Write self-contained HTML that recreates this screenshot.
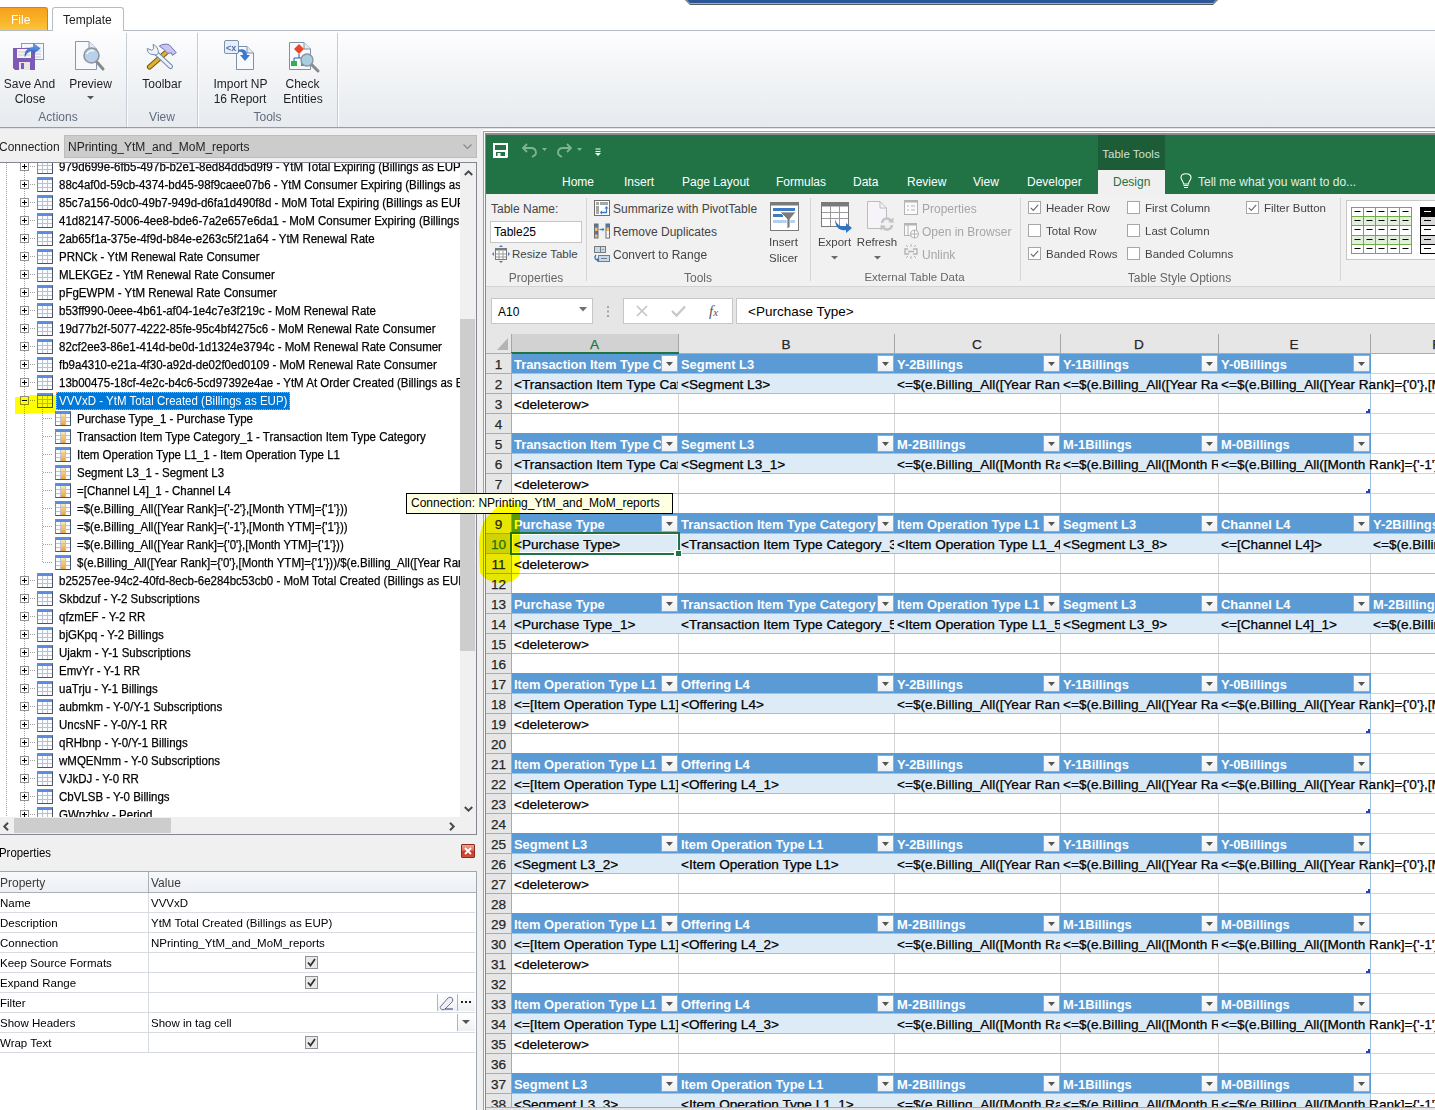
<!DOCTYPE html>
<html><head><meta charset="utf-8">
<style>
*{box-sizing:border-box}
html,body{margin:0;padding:0}
body{width:1435px;height:1110px;overflow:hidden;position:relative;background:#fff;font-family:"Liberation Sans",sans-serif;color:#000}
.a{position:absolute}
.t{position:absolute;white-space:pre;line-height:1}
.s{-webkit-text-stroke:0.25px currentColor}
svg{position:absolute;overflow:visible}
</style></head><body>
<div class="a" style="left:0;top:0;width:1435px;height:31px;background:#fff"></div><svg style="left:685px;top:0" width="533" height="6" viewBox="0 0 533 6"><path d="M0,0 L5,5 L528,5 L533,0 Z" fill="#5a5a5a"/><path d="M1,0 L5,4 L528,4 L532,0 Z" fill="#8fb3df"/><path d="M2,0 L5,3 L528,3 L531,0 Z" fill="#2b5796"/></svg><div class="a" style="left:0;top:30px;width:1435px;height:1px;background:#b6bcc6"></div><div class="a" style="left:0;top:7px;width:48px;height:23px;background:linear-gradient(#f9a01b,#f8b42a 60%,#fbc63c);border:1px solid #d9800f;border-left:none;border-bottom:none;border-radius:0 3px 0 0"></div><div class="t" style="left:11px;top:14px;font-size:12px;color:#fff">File</div><div class="a" style="left:52px;top:7px;width:72px;height:25px;background:#fff;border:1px solid #b6bcc6;border-bottom:none;border-radius:3px 3px 0 0"></div><div class="t" style="left:63px;top:14px;font-size:12px;color:#1e1e1e">Template</div><div class="a" style="left:0;top:31px;width:1435px;height:96px;background:linear-gradient(#fdfdfe,#f3f5f7 40%,#e7eaee)"></div><div class="a" style="left:0;top:127px;width:1435px;height:1px;background:#959daa"></div><div class="a" style="left:0;top:128px;width:1435px;height:1px;background:#dfe3e8"></div><div class="a" style="left:126px;top:33px;width:1px;height:94px;background:#c6ccd4"></div><div class="a" style="left:127px;top:33px;width:1px;height:94px;background:#fcfcfd"></div><div class="a" style="left:197px;top:33px;width:1px;height:94px;background:#c6ccd4"></div><div class="a" style="left:198px;top:33px;width:1px;height:94px;background:#fcfcfd"></div><div class="a" style="left:337px;top:33px;width:1px;height:94px;background:#c6ccd4"></div><div class="a" style="left:338px;top:33px;width:1px;height:94px;background:#fcfcfd"></div><div class="t" style="left:-120.5px;width:300px;text-align:center;top:77.8px;font-size:12px;color:#1e1e1e;">Save And</div><div class="t" style="left:-120px;width:300px;text-align:center;top:92.8px;font-size:12px;color:#1e1e1e;">Close</div><div class="t" style="left:-59.5px;width:300px;text-align:center;top:77.8px;font-size:12px;color:#1e1e1e;">Preview</div><svg style="left:87px;top:96px" width="7" height="4"><path d="M0,0 L7,0 L3.5,3.5Z" fill="#555"/></svg><div class="t" style="left:-92px;width:300px;text-align:center;top:110.8px;font-size:12px;color:#5f6b7d;">Actions</div><div class="t" style="left:12px;width:300px;text-align:center;top:77.8px;font-size:12px;color:#1e1e1e;">Toolbar</div><div class="t" style="left:12px;width:300px;text-align:center;top:110.8px;font-size:12px;color:#5f6b7d;">View</div><div class="t" style="left:90.5px;width:300px;text-align:center;top:77.8px;font-size:12px;color:#1e1e1e;">Import NP</div><div class="t" style="left:90px;width:300px;text-align:center;top:92.8px;font-size:12px;color:#1e1e1e;">16 Report</div><div class="t" style="left:152.5px;width:300px;text-align:center;top:77.8px;font-size:12px;color:#1e1e1e;">Check</div><div class="t" style="left:153px;width:300px;text-align:center;top:92.8px;font-size:12px;color:#1e1e1e;">Entities</div><div class="t" style="left:117.5px;width:300px;text-align:center;top:110.8px;font-size:12px;color:#5f6b7d;">Tools</div><svg style="left:12px;top:42px" width="34" height="30" viewBox="0 0 34 30">
<rect x="9.5" y="1.5" width="22" height="16" fill="#f4f7fb" stroke="#8a9bb5"/>
<line x1="13" y1="6" x2="29" y2="6" stroke="#b8c8dc"/><line x1="13" y1="9" x2="29" y2="9" stroke="#b8c8dc"/><line x1="13" y1="12" x2="29" y2="12" stroke="#b8c8dc"/><line x1="13" y1="15" x2="29" y2="15" stroke="#b8c8dc"/>
<path d="M1,6 L23,6 L23,28 L3,28 L1,26 Z" fill="#7d5bb5"/>
<rect x="5" y="7" width="14" height="9" fill="#f3f3f3"/><line x1="6" y1="10" x2="18" y2="10" stroke="#ccc"/><line x1="6" y1="13" x2="18" y2="13" stroke="#ccc"/>
<rect x="7" y="20" width="11" height="8" fill="#e6e6e6"/><rect x="9" y="21" width="3" height="6" fill="#7d5bb5"/>
<defs><linearGradient id="sa" x1="0" y1="0" x2="0" y2="1"><stop offset="0" stop-color="#6aa6ee"/><stop offset="1" stop-color="#2458c0"/></linearGradient></defs><path d="M13,14.5 C12.5,9 16,5.5 21.5,5.5 L21.5,1.5 L28,6.5 L21.5,11.5 L21.5,8.5 C17.5,8.5 14.5,10.5 13,14.5 Z" fill="url(#sa)" stroke="#2a5cb8" stroke-width="0.5"/>
</svg><svg style="left:74px;top:40px" width="32" height="32" viewBox="0 0 32 32">
<path d="M1.5,1.5 L15,1.5 L22.5,9 L22.5,29.5 L1.5,29.5 Z" fill="#f7f9fc" stroke="#8797ae"/>
<path d="M15,1.5 L15,9 L22.5,9" fill="#e3e9f1" stroke="#8797ae"/>
<line x1="22" y1="21" x2="29" y2="29" stroke="#8a8a8a" stroke-width="3" stroke-linecap="round"/>
<circle cx="17.5" cy="15.5" r="7.5" fill="#b9d0ec" stroke="#8f959c" stroke-width="1.6"/>
<path d="M13,14 C14,11 17,10 20,11" stroke="#fff" stroke-width="1.2" fill="none"/>
</svg><svg style="left:146px;top:43px" width="32" height="28" viewBox="0 0 32 28">
<line x1="3.5" y1="24" x2="20" y2="9.5" stroke="#7a5608" stroke-width="5.2" stroke-linecap="round"/>
<line x1="3.5" y1="24" x2="20" y2="9.5" stroke="#e0b030" stroke-width="3.2" stroke-linecap="round"/>
<path d="M13.3,3.1 C16,1 20,0.8 23,1.6 L29.4,8.5 L30.3,9.6 L26.4,12.4 L25.5,9.9 L21.6,10.4 L18,6.5 Z" fill="#c9c5ec" stroke="#7470b8" stroke-width="1"/>
<line x1="10" y1="10" x2="24.5" y2="23.5" stroke="#6f88ad" stroke-width="5" stroke-linecap="round"/>
<line x1="10" y1="10" x2="24.5" y2="23.5" stroke="#eef3fa" stroke-width="3" stroke-linecap="round"/>
<path d="M1.3,5.5 C1,9 3.5,11.5 7,11.5 L10.5,12 L12.5,10 C12,6.5 11.5,3 7,1.5 L7.8,5.5 L5.8,7.3 Z" fill="#eef3fa" stroke="#6f88ad" stroke-width="1"/>
</svg><svg style="left:223px;top:39px" width="33" height="32" viewBox="0 0 33 32">
<path d="M13.5,7.5 L24,7.5 L30.5,14 L30.5,30.5 L13.5,30.5 Z" fill="#f7f9fc" stroke="#8090a8"/>
<path d="M24,7.5 L24,14 L30.5,14" fill="#e4eaf2" stroke="#8090a8"/>
<rect x="1.5" y="1.5" width="14" height="13" rx="1.5" fill="#e8eef8" stroke="#8090a8"/>
<text x="3" y="12" font-family="Liberation Sans" font-size="9" font-weight="bold" fill="#4a6fb0">&lt;x</text>
<path d="M15,11 C20,9 24,11 24,16 L27,16 L22,22 L17,16 L20,16 C20,13 18,12 15,13Z" fill="#3a78d4"/>
</svg><svg style="left:288px;top:41px" width="34" height="32" viewBox="0 0 34 32">
<path d="M1.5,1.5 L16,1.5 L22.5,8 L22.5,28.5 L1.5,28.5 Z" fill="#f7f9fc" stroke="#8090a8"/>
<path d="M16,1.5 L16,8 L22.5,8" fill="#e4eaf2" stroke="#8090a8"/>
<path d="M11,3 L16,8 L11,13 L6,8Z" fill="#e8462a"/>
<path d="M11,13 L11,17 M6,17 L16,17 M6,17 L6,20 M16,17 L16,20" stroke="#2a5ea8" fill="none"/>
<rect x="3" y="20" width="6" height="5" fill="#2fb24a"/><rect x="13" y="20" width="6" height="5" fill="#2fb24a"/>
<line x1="23" y1="23" x2="30" y2="30" stroke="#8a8a8a" stroke-width="3" stroke-linecap="round"/>
<circle cx="19" cy="19" r="6" fill="#a8cfe0" stroke="#8f959c" stroke-width="1.4"/>
</svg><div class="a" style="left:0;top:129px;width:483px;height:981px;background:#f0f0f0"></div><div class="t" style="left:-1px;top:140.8px;font-size:12px;color:#1e1e1e;">Connection</div><div class="a" style="left:64px;top:135px;width:413px;height:23px;background:#cccccc;border:1px solid #bcbcbc"></div><div class="t" style="left:68px;top:140.8px;font-size:12px;color:#1e1e1e;">NPrinting_YtM_and_MoM_reports</div><svg style="left:463px;top:144px" width="10" height="6"><path d="M0.5,0.5 L4.5,4.5 L8.5,0.5" stroke="#8a8a8a" stroke-width="1.2" fill="none"/></svg><div class="a" style="left:-1px;top:162px;width:478px;height:673px;border:1px solid #828790;background:#fff"></div><div class="a" style="left:460px;top:163px;width:16px;height:654px;background:#f0f0f0"></div><div class="a" style="left:460px;top:319px;width:15px;height:332px;background:#cdcdcd"></div><svg style="left:464px;top:170px" width="9" height="6"><path d="M0.8,5 L4.5,1.3 L8.2,5" stroke="#4a4a4a" stroke-width="2" fill="none"/></svg><svg style="left:464px;top:806px" width="9" height="6"><path d="M0.8,1 L4.5,4.7 L8.2,1" stroke="#4a4a4a" stroke-width="2" fill="none"/></svg><div class="a" style="left:0;top:817px;width:476px;height:17px;background:#f0f0f0"></div><div class="a" style="left:14px;top:818px;width:157px;height:15px;background:#cdcdcd"></div><svg style="left:3px;top:822px" width="6" height="9"><path d="M5,0.8 L1.3,4.5 L5,8.2" stroke="#4a4a4a" stroke-width="2" fill="none"/></svg><svg style="left:449px;top:822px" width="6" height="9"><path d="M1,0.8 L4.7,4.5 L1,8.2" stroke="#4a4a4a" stroke-width="2" fill="none"/></svg><div class="a" style="left:0;top:163px;width:460px;height:654px;overflow:hidden"><svg style="left:0;top:0;width:0;height:0"><defs><linearGradient id="og" x1="0" y1="0" x2="0" y2="1"><stop offset="0" stop-color="#fbe7b8"/><stop offset="1" stop-color="#eca238"/></linearGradient></defs></svg><div class="a" style="left:6px;top:0;width:1px;height:655px;background:repeating-linear-gradient(#a0a0a0 0 1px,transparent 1px 2px)"></div><div class="a" style="left:24px;top:0;width:1px;height:655px;background:repeating-linear-gradient(#a0a0a0 0 1px,transparent 1px 2px)"></div><div class="a" style="left:42px;top:246px;width:1px;height:153px;background:repeating-linear-gradient(#a0a0a0 0 1px,transparent 1px 2px)"></div><div class="a" style="left:20px;top:-1px;width:9px;height:9px;background:#fff;border:1px solid #919191"></div><div class="a" style="left:22px;top:3px;width:5px;height:1px;background:#000"></div><div class="a" style="left:24px;top:1px;width:1px;height:5px;background:#000"></div><div class="a" style="left:30px;top:3px;width:6px;height:1px;background:repeating-linear-gradient(90deg,#a0a0a0 0 1px,transparent 1px 2px)"></div><svg style="left:37px;top:-4px" width="16" height="15" viewBox="0 0 16 15"><rect x="0.5" y="0.5" width="15" height="14" fill="#fbfcfe" stroke="#7f8ca0"/><rect x="1" y="1" width="14" height="2" fill="#5a8de0"/><path d="M5.5,3 V14 M10.5,3 V14 M1,6.5 H15 M1,10.5 H15" stroke="#b8c2d0" fill="none"/><path d="M0.5,14.5 H15.5 V0.5" stroke="#475469" fill="none"/></svg><div class="t s" style="left:59px;top:-2.0px;font-size:12.5px;transform:scaleX(0.92);transform-origin:0 0;color:#000">979d699e-6fb5-497b-b2e1-8ed84dd5d9f9 - YtM Total Expiring (Billings as EUP)</div><div class="a" style="left:20px;top:17px;width:9px;height:9px;background:#fff;border:1px solid #919191"></div><div class="a" style="left:22px;top:21px;width:5px;height:1px;background:#000"></div><div class="a" style="left:24px;top:19px;width:1px;height:5px;background:#000"></div><div class="a" style="left:30px;top:21px;width:6px;height:1px;background:repeating-linear-gradient(90deg,#a0a0a0 0 1px,transparent 1px 2px)"></div><svg style="left:37px;top:14px" width="16" height="15" viewBox="0 0 16 15"><rect x="0.5" y="0.5" width="15" height="14" fill="#fbfcfe" stroke="#7f8ca0"/><rect x="1" y="1" width="14" height="2" fill="#5a8de0"/><path d="M5.5,3 V14 M10.5,3 V14 M1,6.5 H15 M1,10.5 H15" stroke="#b8c2d0" fill="none"/><path d="M0.5,14.5 H15.5 V0.5" stroke="#475469" fill="none"/></svg><div class="t s" style="left:59px;top:16.0px;font-size:12.5px;transform:scaleX(0.92);transform-origin:0 0;color:#000">88c4af0d-59cb-4374-bd45-98f9caee07b6 - YtM Consumer Expiring (Billings as EUP)</div><div class="a" style="left:20px;top:35px;width:9px;height:9px;background:#fff;border:1px solid #919191"></div><div class="a" style="left:22px;top:39px;width:5px;height:1px;background:#000"></div><div class="a" style="left:24px;top:37px;width:1px;height:5px;background:#000"></div><div class="a" style="left:30px;top:39px;width:6px;height:1px;background:repeating-linear-gradient(90deg,#a0a0a0 0 1px,transparent 1px 2px)"></div><svg style="left:37px;top:32px" width="16" height="15" viewBox="0 0 16 15"><rect x="0.5" y="0.5" width="15" height="14" fill="#fbfcfe" stroke="#7f8ca0"/><rect x="1" y="1" width="14" height="2" fill="#5a8de0"/><path d="M5.5,3 V14 M10.5,3 V14 M1,6.5 H15 M1,10.5 H15" stroke="#b8c2d0" fill="none"/><path d="M0.5,14.5 H15.5 V0.5" stroke="#475469" fill="none"/></svg><div class="t s" style="left:59px;top:34.0px;font-size:12.5px;transform:scaleX(0.92);transform-origin:0 0;color:#000">85c7a156-0dc0-49b7-949d-d6fa1d490f8d - MoM Total Expiring (Billings as EUP)</div><div class="a" style="left:20px;top:53px;width:9px;height:9px;background:#fff;border:1px solid #919191"></div><div class="a" style="left:22px;top:57px;width:5px;height:1px;background:#000"></div><div class="a" style="left:24px;top:55px;width:1px;height:5px;background:#000"></div><div class="a" style="left:30px;top:57px;width:6px;height:1px;background:repeating-linear-gradient(90deg,#a0a0a0 0 1px,transparent 1px 2px)"></div><svg style="left:37px;top:50px" width="16" height="15" viewBox="0 0 16 15"><rect x="0.5" y="0.5" width="15" height="14" fill="#fbfcfe" stroke="#7f8ca0"/><rect x="1" y="1" width="14" height="2" fill="#5a8de0"/><path d="M5.5,3 V14 M10.5,3 V14 M1,6.5 H15 M1,10.5 H15" stroke="#b8c2d0" fill="none"/><path d="M0.5,14.5 H15.5 V0.5" stroke="#475469" fill="none"/></svg><div class="t s" style="left:59px;top:52.0px;font-size:12.5px;transform:scaleX(0.92);transform-origin:0 0;color:#000">41d82147-5006-4ee8-bde6-7a2e657e6da1 - MoM Consumer Expiring (Billings as EUP)</div><div class="a" style="left:20px;top:71px;width:9px;height:9px;background:#fff;border:1px solid #919191"></div><div class="a" style="left:22px;top:75px;width:5px;height:1px;background:#000"></div><div class="a" style="left:24px;top:73px;width:1px;height:5px;background:#000"></div><div class="a" style="left:30px;top:75px;width:6px;height:1px;background:repeating-linear-gradient(90deg,#a0a0a0 0 1px,transparent 1px 2px)"></div><svg style="left:37px;top:68px" width="16" height="15" viewBox="0 0 16 15"><rect x="0.5" y="0.5" width="15" height="14" fill="#fbfcfe" stroke="#7f8ca0"/><rect x="1" y="1" width="14" height="2" fill="#5a8de0"/><path d="M5.5,3 V14 M10.5,3 V14 M1,6.5 H15 M1,10.5 H15" stroke="#b8c2d0" fill="none"/><path d="M0.5,14.5 H15.5 V0.5" stroke="#475469" fill="none"/></svg><div class="t s" style="left:59px;top:70.0px;font-size:12.5px;transform:scaleX(0.92);transform-origin:0 0;color:#000">2ab65f1a-375e-4f9d-b84e-e263c5f21a64 - YtM Renewal Rate</div><div class="a" style="left:20px;top:89px;width:9px;height:9px;background:#fff;border:1px solid #919191"></div><div class="a" style="left:22px;top:93px;width:5px;height:1px;background:#000"></div><div class="a" style="left:24px;top:91px;width:1px;height:5px;background:#000"></div><div class="a" style="left:30px;top:93px;width:6px;height:1px;background:repeating-linear-gradient(90deg,#a0a0a0 0 1px,transparent 1px 2px)"></div><svg style="left:37px;top:86px" width="16" height="15" viewBox="0 0 16 15"><rect x="0.5" y="0.5" width="15" height="14" fill="#fbfcfe" stroke="#7f8ca0"/><rect x="1" y="1" width="14" height="2" fill="#5a8de0"/><path d="M5.5,3 V14 M10.5,3 V14 M1,6.5 H15 M1,10.5 H15" stroke="#b8c2d0" fill="none"/><path d="M0.5,14.5 H15.5 V0.5" stroke="#475469" fill="none"/></svg><div class="t s" style="left:59px;top:88.0px;font-size:12.5px;transform:scaleX(0.92);transform-origin:0 0;color:#000">PRNCk - YtM Renewal Rate Consumer</div><div class="a" style="left:20px;top:107px;width:9px;height:9px;background:#fff;border:1px solid #919191"></div><div class="a" style="left:22px;top:111px;width:5px;height:1px;background:#000"></div><div class="a" style="left:24px;top:109px;width:1px;height:5px;background:#000"></div><div class="a" style="left:30px;top:111px;width:6px;height:1px;background:repeating-linear-gradient(90deg,#a0a0a0 0 1px,transparent 1px 2px)"></div><svg style="left:37px;top:104px" width="16" height="15" viewBox="0 0 16 15"><rect x="0.5" y="0.5" width="15" height="14" fill="#fbfcfe" stroke="#7f8ca0"/><rect x="1" y="1" width="14" height="2" fill="#5a8de0"/><path d="M5.5,3 V14 M10.5,3 V14 M1,6.5 H15 M1,10.5 H15" stroke="#b8c2d0" fill="none"/><path d="M0.5,14.5 H15.5 V0.5" stroke="#475469" fill="none"/></svg><div class="t s" style="left:59px;top:106.0px;font-size:12.5px;transform:scaleX(0.92);transform-origin:0 0;color:#000">MLEKGEz - YtM Renewal Rate Consumer</div><div class="a" style="left:20px;top:125px;width:9px;height:9px;background:#fff;border:1px solid #919191"></div><div class="a" style="left:22px;top:129px;width:5px;height:1px;background:#000"></div><div class="a" style="left:24px;top:127px;width:1px;height:5px;background:#000"></div><div class="a" style="left:30px;top:129px;width:6px;height:1px;background:repeating-linear-gradient(90deg,#a0a0a0 0 1px,transparent 1px 2px)"></div><svg style="left:37px;top:122px" width="16" height="15" viewBox="0 0 16 15"><rect x="0.5" y="0.5" width="15" height="14" fill="#fbfcfe" stroke="#7f8ca0"/><rect x="1" y="1" width="14" height="2" fill="#5a8de0"/><path d="M5.5,3 V14 M10.5,3 V14 M1,6.5 H15 M1,10.5 H15" stroke="#b8c2d0" fill="none"/><path d="M0.5,14.5 H15.5 V0.5" stroke="#475469" fill="none"/></svg><div class="t s" style="left:59px;top:124.0px;font-size:12.5px;transform:scaleX(0.92);transform-origin:0 0;color:#000">pFgEWPM - YtM Renewal Rate Consumer</div><div class="a" style="left:20px;top:143px;width:9px;height:9px;background:#fff;border:1px solid #919191"></div><div class="a" style="left:22px;top:147px;width:5px;height:1px;background:#000"></div><div class="a" style="left:24px;top:145px;width:1px;height:5px;background:#000"></div><div class="a" style="left:30px;top:147px;width:6px;height:1px;background:repeating-linear-gradient(90deg,#a0a0a0 0 1px,transparent 1px 2px)"></div><svg style="left:37px;top:140px" width="16" height="15" viewBox="0 0 16 15"><rect x="0.5" y="0.5" width="15" height="14" fill="#fbfcfe" stroke="#7f8ca0"/><rect x="1" y="1" width="14" height="2" fill="#5a8de0"/><path d="M5.5,3 V14 M10.5,3 V14 M1,6.5 H15 M1,10.5 H15" stroke="#b8c2d0" fill="none"/><path d="M0.5,14.5 H15.5 V0.5" stroke="#475469" fill="none"/></svg><div class="t s" style="left:59px;top:142.0px;font-size:12.5px;transform:scaleX(0.92);transform-origin:0 0;color:#000">b53ff990-0eee-4b61-af04-1e4c7e3f219c - MoM Renewal Rate</div><div class="a" style="left:20px;top:161px;width:9px;height:9px;background:#fff;border:1px solid #919191"></div><div class="a" style="left:22px;top:165px;width:5px;height:1px;background:#000"></div><div class="a" style="left:24px;top:163px;width:1px;height:5px;background:#000"></div><div class="a" style="left:30px;top:165px;width:6px;height:1px;background:repeating-linear-gradient(90deg,#a0a0a0 0 1px,transparent 1px 2px)"></div><svg style="left:37px;top:158px" width="16" height="15" viewBox="0 0 16 15"><rect x="0.5" y="0.5" width="15" height="14" fill="#fbfcfe" stroke="#7f8ca0"/><rect x="1" y="1" width="14" height="2" fill="#5a8de0"/><path d="M5.5,3 V14 M10.5,3 V14 M1,6.5 H15 M1,10.5 H15" stroke="#b8c2d0" fill="none"/><path d="M0.5,14.5 H15.5 V0.5" stroke="#475469" fill="none"/></svg><div class="t s" style="left:59px;top:160.0px;font-size:12.5px;transform:scaleX(0.92);transform-origin:0 0;color:#000">19d77b2f-5077-4222-85fe-95c4bf4275c6 - MoM Renewal Rate Consumer</div><div class="a" style="left:20px;top:179px;width:9px;height:9px;background:#fff;border:1px solid #919191"></div><div class="a" style="left:22px;top:183px;width:5px;height:1px;background:#000"></div><div class="a" style="left:24px;top:181px;width:1px;height:5px;background:#000"></div><div class="a" style="left:30px;top:183px;width:6px;height:1px;background:repeating-linear-gradient(90deg,#a0a0a0 0 1px,transparent 1px 2px)"></div><svg style="left:37px;top:176px" width="16" height="15" viewBox="0 0 16 15"><rect x="0.5" y="0.5" width="15" height="14" fill="#fbfcfe" stroke="#7f8ca0"/><rect x="1" y="1" width="14" height="2" fill="#5a8de0"/><path d="M5.5,3 V14 M10.5,3 V14 M1,6.5 H15 M1,10.5 H15" stroke="#b8c2d0" fill="none"/><path d="M0.5,14.5 H15.5 V0.5" stroke="#475469" fill="none"/></svg><div class="t s" style="left:59px;top:178.0px;font-size:12.5px;transform:scaleX(0.92);transform-origin:0 0;color:#000">82cf2ee3-86e1-414d-be0d-1d1324e3794c - MoM Renewal Rate Consumer</div><div class="a" style="left:20px;top:197px;width:9px;height:9px;background:#fff;border:1px solid #919191"></div><div class="a" style="left:22px;top:201px;width:5px;height:1px;background:#000"></div><div class="a" style="left:24px;top:199px;width:1px;height:5px;background:#000"></div><div class="a" style="left:30px;top:201px;width:6px;height:1px;background:repeating-linear-gradient(90deg,#a0a0a0 0 1px,transparent 1px 2px)"></div><svg style="left:37px;top:194px" width="16" height="15" viewBox="0 0 16 15"><rect x="0.5" y="0.5" width="15" height="14" fill="#fbfcfe" stroke="#7f8ca0"/><rect x="1" y="1" width="14" height="2" fill="#5a8de0"/><path d="M5.5,3 V14 M10.5,3 V14 M1,6.5 H15 M1,10.5 H15" stroke="#b8c2d0" fill="none"/><path d="M0.5,14.5 H15.5 V0.5" stroke="#475469" fill="none"/></svg><div class="t s" style="left:59px;top:196.0px;font-size:12.5px;transform:scaleX(0.92);transform-origin:0 0;color:#000">fb9a4310-e21a-4f30-a92d-de02f0ed0109 - MoM Renewal Rate Consumer</div><div class="a" style="left:20px;top:215px;width:9px;height:9px;background:#fff;border:1px solid #919191"></div><div class="a" style="left:22px;top:219px;width:5px;height:1px;background:#000"></div><div class="a" style="left:24px;top:217px;width:1px;height:5px;background:#000"></div><div class="a" style="left:30px;top:219px;width:6px;height:1px;background:repeating-linear-gradient(90deg,#a0a0a0 0 1px,transparent 1px 2px)"></div><svg style="left:37px;top:212px" width="16" height="15" viewBox="0 0 16 15"><rect x="0.5" y="0.5" width="15" height="14" fill="#fbfcfe" stroke="#7f8ca0"/><rect x="1" y="1" width="14" height="2" fill="#5a8de0"/><path d="M5.5,3 V14 M10.5,3 V14 M1,6.5 H15 M1,10.5 H15" stroke="#b8c2d0" fill="none"/><path d="M0.5,14.5 H15.5 V0.5" stroke="#475469" fill="none"/></svg><div class="t s" style="left:59px;top:214.0px;font-size:12.5px;transform:scaleX(0.92);transform-origin:0 0;color:#000">13b00475-18cf-4e2c-b4c6-5cd97392e4ae - YtM At Order Created (Billings as EUP)</div><div class="a" style="left:20px;top:233px;width:9px;height:9px;background:#fff;border:1px solid #919191"></div><div class="a" style="left:22px;top:237px;width:5px;height:1px;background:#000"></div><div class="a" style="left:30px;top:237px;width:6px;height:1px;background:repeating-linear-gradient(90deg,#a0a0a0 0 1px,transparent 1px 2px)"></div><svg style="left:37px;top:230px" width="16" height="15" viewBox="0 0 16 15"><rect x="0.5" y="0.5" width="15" height="14" fill="#fbfcfe" stroke="#7f8ca0"/><rect x="1" y="1" width="14" height="2" fill="#5a8de0"/><path d="M5.5,3 V14 M10.5,3 V14 M1,6.5 H15 M1,10.5 H15" stroke="#b8c2d0" fill="none"/><path d="M0.5,14.5 H15.5 V0.5" stroke="#475469" fill="none"/></svg><div class="a" style="left:56px;top:229px;width:234px;height:18px;background:#0078d7;border:1px dotted #ff9a3c"></div><div class="t" style="left:59px;top:232.0px;font-size:12.5px;transform:scaleX(0.92);transform-origin:0 0;color:#fff">VVVxD - YtM Total Created (Billings as EUP)</div><div class="a" style="left:43px;top:255px;width:9px;height:1px;background:repeating-linear-gradient(90deg,#a0a0a0 0 1px,transparent 1px 2px)"></div><svg style="left:55px;top:248px" width="16" height="15" viewBox="0 0 16 15"><rect x="0.5" y="0.5" width="15" height="14" fill="#fbfcfe" stroke="#7f8ca0"/><rect x="6" y="3" width="4" height="11" fill="url(#og)"/><rect x="1" y="1" width="14" height="2" fill="#5a8de0"/><path d="M5.5,3 V14 M10.5,3 V14 M1,6.5 H15 M1,10.5 H15" stroke="#b8c2d0" fill="none"/><path d="M0.5,14.5 H15.5 V0.5" stroke="#475469" fill="none"/></svg><div class="t s" style="left:77px;top:250.0px;font-size:12.5px;transform:scaleX(0.92);transform-origin:0 0;color:#000">Purchase Type_1 - Purchase Type</div><div class="a" style="left:43px;top:273px;width:9px;height:1px;background:repeating-linear-gradient(90deg,#a0a0a0 0 1px,transparent 1px 2px)"></div><svg style="left:55px;top:266px" width="16" height="15" viewBox="0 0 16 15"><rect x="0.5" y="0.5" width="15" height="14" fill="#fbfcfe" stroke="#7f8ca0"/><rect x="6" y="3" width="4" height="11" fill="url(#og)"/><rect x="1" y="1" width="14" height="2" fill="#5a8de0"/><path d="M5.5,3 V14 M10.5,3 V14 M1,6.5 H15 M1,10.5 H15" stroke="#b8c2d0" fill="none"/><path d="M0.5,14.5 H15.5 V0.5" stroke="#475469" fill="none"/></svg><div class="t s" style="left:77px;top:268.0px;font-size:12.5px;transform:scaleX(0.92);transform-origin:0 0;color:#000">Transaction Item Type Category_1 - Transaction Item Type Category</div><div class="a" style="left:43px;top:291px;width:9px;height:1px;background:repeating-linear-gradient(90deg,#a0a0a0 0 1px,transparent 1px 2px)"></div><svg style="left:55px;top:284px" width="16" height="15" viewBox="0 0 16 15"><rect x="0.5" y="0.5" width="15" height="14" fill="#fbfcfe" stroke="#7f8ca0"/><rect x="6" y="3" width="4" height="11" fill="url(#og)"/><rect x="1" y="1" width="14" height="2" fill="#5a8de0"/><path d="M5.5,3 V14 M10.5,3 V14 M1,6.5 H15 M1,10.5 H15" stroke="#b8c2d0" fill="none"/><path d="M0.5,14.5 H15.5 V0.5" stroke="#475469" fill="none"/></svg><div class="t s" style="left:77px;top:286.0px;font-size:12.5px;transform:scaleX(0.92);transform-origin:0 0;color:#000">Item Operation Type L1_1 - Item Operation Type L1</div><div class="a" style="left:43px;top:309px;width:9px;height:1px;background:repeating-linear-gradient(90deg,#a0a0a0 0 1px,transparent 1px 2px)"></div><svg style="left:55px;top:302px" width="16" height="15" viewBox="0 0 16 15"><rect x="0.5" y="0.5" width="15" height="14" fill="#fbfcfe" stroke="#7f8ca0"/><rect x="6" y="3" width="4" height="11" fill="url(#og)"/><rect x="1" y="1" width="14" height="2" fill="#5a8de0"/><path d="M5.5,3 V14 M10.5,3 V14 M1,6.5 H15 M1,10.5 H15" stroke="#b8c2d0" fill="none"/><path d="M0.5,14.5 H15.5 V0.5" stroke="#475469" fill="none"/></svg><div class="t s" style="left:77px;top:304.0px;font-size:12.5px;transform:scaleX(0.92);transform-origin:0 0;color:#000">Segment L3_1 - Segment L3</div><div class="a" style="left:43px;top:327px;width:9px;height:1px;background:repeating-linear-gradient(90deg,#a0a0a0 0 1px,transparent 1px 2px)"></div><svg style="left:55px;top:320px" width="16" height="15" viewBox="0 0 16 15"><rect x="0.5" y="0.5" width="15" height="14" fill="#fbfcfe" stroke="#7f8ca0"/><rect x="6" y="3" width="4" height="11" fill="url(#og)"/><rect x="1" y="1" width="14" height="2" fill="#5a8de0"/><path d="M5.5,3 V14 M10.5,3 V14 M1,6.5 H15 M1,10.5 H15" stroke="#b8c2d0" fill="none"/><path d="M0.5,14.5 H15.5 V0.5" stroke="#475469" fill="none"/></svg><div class="t s" style="left:77px;top:322.0px;font-size:12.5px;transform:scaleX(0.92);transform-origin:0 0;color:#000">=[Channel L4]_1 - Channel L4</div><div class="a" style="left:43px;top:345px;width:9px;height:1px;background:repeating-linear-gradient(90deg,#a0a0a0 0 1px,transparent 1px 2px)"></div><svg style="left:55px;top:338px" width="16" height="15" viewBox="0 0 16 15"><rect x="0.5" y="0.5" width="15" height="14" fill="#fbfcfe" stroke="#7f8ca0"/><rect x="6" y="3" width="4" height="11" fill="url(#og)"/><rect x="1" y="1" width="14" height="2" fill="#5a8de0"/><path d="M5.5,3 V14 M10.5,3 V14 M1,6.5 H15 M1,10.5 H15" stroke="#b8c2d0" fill="none"/><path d="M0.5,14.5 H15.5 V0.5" stroke="#475469" fill="none"/></svg><div class="t s" style="left:77px;top:340.0px;font-size:12.5px;transform:scaleX(0.92);transform-origin:0 0;color:#000">=$(e.Billing_All([Year Rank]={'-2'},[Month YTM]={'1'}))</div><div class="a" style="left:43px;top:363px;width:9px;height:1px;background:repeating-linear-gradient(90deg,#a0a0a0 0 1px,transparent 1px 2px)"></div><svg style="left:55px;top:356px" width="16" height="15" viewBox="0 0 16 15"><rect x="0.5" y="0.5" width="15" height="14" fill="#fbfcfe" stroke="#7f8ca0"/><rect x="6" y="3" width="4" height="11" fill="url(#og)"/><rect x="1" y="1" width="14" height="2" fill="#5a8de0"/><path d="M5.5,3 V14 M10.5,3 V14 M1,6.5 H15 M1,10.5 H15" stroke="#b8c2d0" fill="none"/><path d="M0.5,14.5 H15.5 V0.5" stroke="#475469" fill="none"/></svg><div class="t s" style="left:77px;top:358.0px;font-size:12.5px;transform:scaleX(0.92);transform-origin:0 0;color:#000">=$(e.Billing_All([Year Rank]={'-1'},[Month YTM]={'1'}))</div><div class="a" style="left:43px;top:381px;width:9px;height:1px;background:repeating-linear-gradient(90deg,#a0a0a0 0 1px,transparent 1px 2px)"></div><svg style="left:55px;top:374px" width="16" height="15" viewBox="0 0 16 15"><rect x="0.5" y="0.5" width="15" height="14" fill="#fbfcfe" stroke="#7f8ca0"/><rect x="6" y="3" width="4" height="11" fill="url(#og)"/><rect x="1" y="1" width="14" height="2" fill="#5a8de0"/><path d="M5.5,3 V14 M10.5,3 V14 M1,6.5 H15 M1,10.5 H15" stroke="#b8c2d0" fill="none"/><path d="M0.5,14.5 H15.5 V0.5" stroke="#475469" fill="none"/></svg><div class="t s" style="left:77px;top:376.0px;font-size:12.5px;transform:scaleX(0.92);transform-origin:0 0;color:#000">=$(e.Billing_All([Year Rank]={'0'},[Month YTM]={'1'}))</div><div class="a" style="left:43px;top:399px;width:9px;height:1px;background:repeating-linear-gradient(90deg,#a0a0a0 0 1px,transparent 1px 2px)"></div><svg style="left:55px;top:392px" width="16" height="15" viewBox="0 0 16 15"><rect x="0.5" y="0.5" width="15" height="14" fill="#fbfcfe" stroke="#7f8ca0"/><rect x="6" y="3" width="4" height="11" fill="url(#og)"/><rect x="1" y="1" width="14" height="2" fill="#5a8de0"/><path d="M5.5,3 V14 M10.5,3 V14 M1,6.5 H15 M1,10.5 H15" stroke="#b8c2d0" fill="none"/><path d="M0.5,14.5 H15.5 V0.5" stroke="#475469" fill="none"/></svg><div class="t s" style="left:77px;top:394.0px;font-size:12.5px;transform:scaleX(0.92);transform-origin:0 0;color:#000">$(e.Billing_All([Year Rank]={'0'},[Month YTM]={'1'}))/$(e.Billing_All([Year Rank]={'-1'}))</div><div class="a" style="left:20px;top:413px;width:9px;height:9px;background:#fff;border:1px solid #919191"></div><div class="a" style="left:22px;top:417px;width:5px;height:1px;background:#000"></div><div class="a" style="left:24px;top:415px;width:1px;height:5px;background:#000"></div><div class="a" style="left:30px;top:417px;width:6px;height:1px;background:repeating-linear-gradient(90deg,#a0a0a0 0 1px,transparent 1px 2px)"></div><svg style="left:37px;top:410px" width="16" height="15" viewBox="0 0 16 15"><rect x="0.5" y="0.5" width="15" height="14" fill="#fbfcfe" stroke="#7f8ca0"/><rect x="1" y="1" width="14" height="2" fill="#5a8de0"/><path d="M5.5,3 V14 M10.5,3 V14 M1,6.5 H15 M1,10.5 H15" stroke="#b8c2d0" fill="none"/><path d="M0.5,14.5 H15.5 V0.5" stroke="#475469" fill="none"/></svg><div class="t s" style="left:59px;top:412.0px;font-size:12.5px;transform:scaleX(0.92);transform-origin:0 0;color:#000">b25257ee-94c2-40fd-8ecb-6e284bc53cb0 - MoM Total Created (Billings as EUP)</div><div class="a" style="left:20px;top:431px;width:9px;height:9px;background:#fff;border:1px solid #919191"></div><div class="a" style="left:22px;top:435px;width:5px;height:1px;background:#000"></div><div class="a" style="left:24px;top:433px;width:1px;height:5px;background:#000"></div><div class="a" style="left:30px;top:435px;width:6px;height:1px;background:repeating-linear-gradient(90deg,#a0a0a0 0 1px,transparent 1px 2px)"></div><svg style="left:37px;top:428px" width="16" height="15" viewBox="0 0 16 15"><rect x="0.5" y="0.5" width="15" height="14" fill="#fbfcfe" stroke="#7f8ca0"/><rect x="1" y="1" width="14" height="2" fill="#5a8de0"/><path d="M5.5,3 V14 M10.5,3 V14 M1,6.5 H15 M1,10.5 H15" stroke="#b8c2d0" fill="none"/><path d="M0.5,14.5 H15.5 V0.5" stroke="#475469" fill="none"/></svg><div class="t s" style="left:59px;top:430.0px;font-size:12.5px;transform:scaleX(0.92);transform-origin:0 0;color:#000">Skbdzuf - Y-2 Subscriptions</div><div class="a" style="left:20px;top:449px;width:9px;height:9px;background:#fff;border:1px solid #919191"></div><div class="a" style="left:22px;top:453px;width:5px;height:1px;background:#000"></div><div class="a" style="left:24px;top:451px;width:1px;height:5px;background:#000"></div><div class="a" style="left:30px;top:453px;width:6px;height:1px;background:repeating-linear-gradient(90deg,#a0a0a0 0 1px,transparent 1px 2px)"></div><svg style="left:37px;top:446px" width="16" height="15" viewBox="0 0 16 15"><rect x="0.5" y="0.5" width="15" height="14" fill="#fbfcfe" stroke="#7f8ca0"/><rect x="1" y="1" width="14" height="2" fill="#5a8de0"/><path d="M5.5,3 V14 M10.5,3 V14 M1,6.5 H15 M1,10.5 H15" stroke="#b8c2d0" fill="none"/><path d="M0.5,14.5 H15.5 V0.5" stroke="#475469" fill="none"/></svg><div class="t s" style="left:59px;top:448.0px;font-size:12.5px;transform:scaleX(0.92);transform-origin:0 0;color:#000">qfzmEF - Y-2 RR</div><div class="a" style="left:20px;top:467px;width:9px;height:9px;background:#fff;border:1px solid #919191"></div><div class="a" style="left:22px;top:471px;width:5px;height:1px;background:#000"></div><div class="a" style="left:24px;top:469px;width:1px;height:5px;background:#000"></div><div class="a" style="left:30px;top:471px;width:6px;height:1px;background:repeating-linear-gradient(90deg,#a0a0a0 0 1px,transparent 1px 2px)"></div><svg style="left:37px;top:464px" width="16" height="15" viewBox="0 0 16 15"><rect x="0.5" y="0.5" width="15" height="14" fill="#fbfcfe" stroke="#7f8ca0"/><rect x="1" y="1" width="14" height="2" fill="#5a8de0"/><path d="M5.5,3 V14 M10.5,3 V14 M1,6.5 H15 M1,10.5 H15" stroke="#b8c2d0" fill="none"/><path d="M0.5,14.5 H15.5 V0.5" stroke="#475469" fill="none"/></svg><div class="t s" style="left:59px;top:466.0px;font-size:12.5px;transform:scaleX(0.92);transform-origin:0 0;color:#000">bjGKpq - Y-2 Billings</div><div class="a" style="left:20px;top:485px;width:9px;height:9px;background:#fff;border:1px solid #919191"></div><div class="a" style="left:22px;top:489px;width:5px;height:1px;background:#000"></div><div class="a" style="left:24px;top:487px;width:1px;height:5px;background:#000"></div><div class="a" style="left:30px;top:489px;width:6px;height:1px;background:repeating-linear-gradient(90deg,#a0a0a0 0 1px,transparent 1px 2px)"></div><svg style="left:37px;top:482px" width="16" height="15" viewBox="0 0 16 15"><rect x="0.5" y="0.5" width="15" height="14" fill="#fbfcfe" stroke="#7f8ca0"/><rect x="1" y="1" width="14" height="2" fill="#5a8de0"/><path d="M5.5,3 V14 M10.5,3 V14 M1,6.5 H15 M1,10.5 H15" stroke="#b8c2d0" fill="none"/><path d="M0.5,14.5 H15.5 V0.5" stroke="#475469" fill="none"/></svg><div class="t s" style="left:59px;top:484.0px;font-size:12.5px;transform:scaleX(0.92);transform-origin:0 0;color:#000">Ujakm - Y-1 Subscriptions</div><div class="a" style="left:20px;top:503px;width:9px;height:9px;background:#fff;border:1px solid #919191"></div><div class="a" style="left:22px;top:507px;width:5px;height:1px;background:#000"></div><div class="a" style="left:24px;top:505px;width:1px;height:5px;background:#000"></div><div class="a" style="left:30px;top:507px;width:6px;height:1px;background:repeating-linear-gradient(90deg,#a0a0a0 0 1px,transparent 1px 2px)"></div><svg style="left:37px;top:500px" width="16" height="15" viewBox="0 0 16 15"><rect x="0.5" y="0.5" width="15" height="14" fill="#fbfcfe" stroke="#7f8ca0"/><rect x="1" y="1" width="14" height="2" fill="#5a8de0"/><path d="M5.5,3 V14 M10.5,3 V14 M1,6.5 H15 M1,10.5 H15" stroke="#b8c2d0" fill="none"/><path d="M0.5,14.5 H15.5 V0.5" stroke="#475469" fill="none"/></svg><div class="t s" style="left:59px;top:502.0px;font-size:12.5px;transform:scaleX(0.92);transform-origin:0 0;color:#000">EmvYr - Y-1 RR</div><div class="a" style="left:20px;top:521px;width:9px;height:9px;background:#fff;border:1px solid #919191"></div><div class="a" style="left:22px;top:525px;width:5px;height:1px;background:#000"></div><div class="a" style="left:24px;top:523px;width:1px;height:5px;background:#000"></div><div class="a" style="left:30px;top:525px;width:6px;height:1px;background:repeating-linear-gradient(90deg,#a0a0a0 0 1px,transparent 1px 2px)"></div><svg style="left:37px;top:518px" width="16" height="15" viewBox="0 0 16 15"><rect x="0.5" y="0.5" width="15" height="14" fill="#fbfcfe" stroke="#7f8ca0"/><rect x="1" y="1" width="14" height="2" fill="#5a8de0"/><path d="M5.5,3 V14 M10.5,3 V14 M1,6.5 H15 M1,10.5 H15" stroke="#b8c2d0" fill="none"/><path d="M0.5,14.5 H15.5 V0.5" stroke="#475469" fill="none"/></svg><div class="t s" style="left:59px;top:520.0px;font-size:12.5px;transform:scaleX(0.92);transform-origin:0 0;color:#000">uaTrju - Y-1 Billings</div><div class="a" style="left:20px;top:539px;width:9px;height:9px;background:#fff;border:1px solid #919191"></div><div class="a" style="left:22px;top:543px;width:5px;height:1px;background:#000"></div><div class="a" style="left:24px;top:541px;width:1px;height:5px;background:#000"></div><div class="a" style="left:30px;top:543px;width:6px;height:1px;background:repeating-linear-gradient(90deg,#a0a0a0 0 1px,transparent 1px 2px)"></div><svg style="left:37px;top:536px" width="16" height="15" viewBox="0 0 16 15"><rect x="0.5" y="0.5" width="15" height="14" fill="#fbfcfe" stroke="#7f8ca0"/><rect x="1" y="1" width="14" height="2" fill="#5a8de0"/><path d="M5.5,3 V14 M10.5,3 V14 M1,6.5 H15 M1,10.5 H15" stroke="#b8c2d0" fill="none"/><path d="M0.5,14.5 H15.5 V0.5" stroke="#475469" fill="none"/></svg><div class="t s" style="left:59px;top:538.0px;font-size:12.5px;transform:scaleX(0.92);transform-origin:0 0;color:#000">aubmkm - Y-0/Y-1 Subscriptions</div><div class="a" style="left:20px;top:557px;width:9px;height:9px;background:#fff;border:1px solid #919191"></div><div class="a" style="left:22px;top:561px;width:5px;height:1px;background:#000"></div><div class="a" style="left:24px;top:559px;width:1px;height:5px;background:#000"></div><div class="a" style="left:30px;top:561px;width:6px;height:1px;background:repeating-linear-gradient(90deg,#a0a0a0 0 1px,transparent 1px 2px)"></div><svg style="left:37px;top:554px" width="16" height="15" viewBox="0 0 16 15"><rect x="0.5" y="0.5" width="15" height="14" fill="#fbfcfe" stroke="#7f8ca0"/><rect x="1" y="1" width="14" height="2" fill="#5a8de0"/><path d="M5.5,3 V14 M10.5,3 V14 M1,6.5 H15 M1,10.5 H15" stroke="#b8c2d0" fill="none"/><path d="M0.5,14.5 H15.5 V0.5" stroke="#475469" fill="none"/></svg><div class="t s" style="left:59px;top:556.0px;font-size:12.5px;transform:scaleX(0.92);transform-origin:0 0;color:#000">UncsNF - Y-0/Y-1 RR</div><div class="a" style="left:20px;top:575px;width:9px;height:9px;background:#fff;border:1px solid #919191"></div><div class="a" style="left:22px;top:579px;width:5px;height:1px;background:#000"></div><div class="a" style="left:24px;top:577px;width:1px;height:5px;background:#000"></div><div class="a" style="left:30px;top:579px;width:6px;height:1px;background:repeating-linear-gradient(90deg,#a0a0a0 0 1px,transparent 1px 2px)"></div><svg style="left:37px;top:572px" width="16" height="15" viewBox="0 0 16 15"><rect x="0.5" y="0.5" width="15" height="14" fill="#fbfcfe" stroke="#7f8ca0"/><rect x="1" y="1" width="14" height="2" fill="#5a8de0"/><path d="M5.5,3 V14 M10.5,3 V14 M1,6.5 H15 M1,10.5 H15" stroke="#b8c2d0" fill="none"/><path d="M0.5,14.5 H15.5 V0.5" stroke="#475469" fill="none"/></svg><div class="t s" style="left:59px;top:574.0px;font-size:12.5px;transform:scaleX(0.92);transform-origin:0 0;color:#000">qRHbnp - Y-0/Y-1 Billings</div><div class="a" style="left:20px;top:593px;width:9px;height:9px;background:#fff;border:1px solid #919191"></div><div class="a" style="left:22px;top:597px;width:5px;height:1px;background:#000"></div><div class="a" style="left:24px;top:595px;width:1px;height:5px;background:#000"></div><div class="a" style="left:30px;top:597px;width:6px;height:1px;background:repeating-linear-gradient(90deg,#a0a0a0 0 1px,transparent 1px 2px)"></div><svg style="left:37px;top:590px" width="16" height="15" viewBox="0 0 16 15"><rect x="0.5" y="0.5" width="15" height="14" fill="#fbfcfe" stroke="#7f8ca0"/><rect x="1" y="1" width="14" height="2" fill="#5a8de0"/><path d="M5.5,3 V14 M10.5,3 V14 M1,6.5 H15 M1,10.5 H15" stroke="#b8c2d0" fill="none"/><path d="M0.5,14.5 H15.5 V0.5" stroke="#475469" fill="none"/></svg><div class="t s" style="left:59px;top:592.0px;font-size:12.5px;transform:scaleX(0.92);transform-origin:0 0;color:#000">wMQENmm - Y-0 Subscriptions</div><div class="a" style="left:20px;top:611px;width:9px;height:9px;background:#fff;border:1px solid #919191"></div><div class="a" style="left:22px;top:615px;width:5px;height:1px;background:#000"></div><div class="a" style="left:24px;top:613px;width:1px;height:5px;background:#000"></div><div class="a" style="left:30px;top:615px;width:6px;height:1px;background:repeating-linear-gradient(90deg,#a0a0a0 0 1px,transparent 1px 2px)"></div><svg style="left:37px;top:608px" width="16" height="15" viewBox="0 0 16 15"><rect x="0.5" y="0.5" width="15" height="14" fill="#fbfcfe" stroke="#7f8ca0"/><rect x="1" y="1" width="14" height="2" fill="#5a8de0"/><path d="M5.5,3 V14 M10.5,3 V14 M1,6.5 H15 M1,10.5 H15" stroke="#b8c2d0" fill="none"/><path d="M0.5,14.5 H15.5 V0.5" stroke="#475469" fill="none"/></svg><div class="t s" style="left:59px;top:610.0px;font-size:12.5px;transform:scaleX(0.92);transform-origin:0 0;color:#000">VJkDJ - Y-0 RR</div><div class="a" style="left:20px;top:629px;width:9px;height:9px;background:#fff;border:1px solid #919191"></div><div class="a" style="left:22px;top:633px;width:5px;height:1px;background:#000"></div><div class="a" style="left:24px;top:631px;width:1px;height:5px;background:#000"></div><div class="a" style="left:30px;top:633px;width:6px;height:1px;background:repeating-linear-gradient(90deg,#a0a0a0 0 1px,transparent 1px 2px)"></div><svg style="left:37px;top:626px" width="16" height="15" viewBox="0 0 16 15"><rect x="0.5" y="0.5" width="15" height="14" fill="#fbfcfe" stroke="#7f8ca0"/><rect x="1" y="1" width="14" height="2" fill="#5a8de0"/><path d="M5.5,3 V14 M10.5,3 V14 M1,6.5 H15 M1,10.5 H15" stroke="#b8c2d0" fill="none"/><path d="M0.5,14.5 H15.5 V0.5" stroke="#475469" fill="none"/></svg><div class="t s" style="left:59px;top:628.0px;font-size:12.5px;transform:scaleX(0.92);transform-origin:0 0;color:#000">CbVLSB - Y-0 Billings</div><div class="a" style="left:20px;top:647px;width:9px;height:9px;background:#fff;border:1px solid #919191"></div><div class="a" style="left:22px;top:651px;width:5px;height:1px;background:#000"></div><div class="a" style="left:24px;top:649px;width:1px;height:5px;background:#000"></div><div class="a" style="left:30px;top:651px;width:6px;height:1px;background:repeating-linear-gradient(90deg,#a0a0a0 0 1px,transparent 1px 2px)"></div><svg style="left:37px;top:644px" width="16" height="15" viewBox="0 0 16 15"><rect x="0.5" y="0.5" width="15" height="14" fill="#fbfcfe" stroke="#7f8ca0"/><rect x="1" y="1" width="14" height="2" fill="#5a8de0"/><path d="M5.5,3 V14 M10.5,3 V14 M1,6.5 H15 M1,10.5 H15" stroke="#b8c2d0" fill="none"/><path d="M0.5,14.5 H15.5 V0.5" stroke="#475469" fill="none"/></svg><div class="t s" style="left:59px;top:646.0px;font-size:12.5px;transform:scaleX(0.92);transform-origin:0 0;color:#000">GWnzhkv - Period</div></div><div class="a" style="left:15px;top:397px;width:14px;height:17px;background:#ffff00;mix-blend-mode:multiply"></div><div class="a" style="left:29px;top:395px;width:27px;height:18px;background:#ffff00;mix-blend-mode:multiply"></div><div class="t" style="left:-1px;top:846.8px;font-size:12px;color:#000;transform:scaleX(0.95);transform-origin:0 0">Properties</div><div class="a" style="left:461px;top:844px;width:14px;height:14px;border:1px solid #8e2a1c;background:linear-gradient(#eba394,#e0705c 45%,#c9391f 55%,#d2503a);border-radius:1px"></div><svg style="left:464px;top:847px" width="8" height="8"><path d="M1,1 L7,7 M7,1 L1,7" stroke="#fff" stroke-width="1.8"/></svg><div class="a" style="left:-1px;top:871px;width:478px;height:250px;border:1px solid #a0a7b2;background:#fff"></div><div class="a" style="left:0;top:872px;width:476px;height:20px;background:linear-gradient(#f8f9fb,#eceff3)"></div><div class="a" style="left:0;top:892px;width:476px;height:1px;background:#a9b0ba"></div><div class="a" style="left:148px;top:872px;width:1px;height:20px;background:#a9b0ba"></div><div class="t" style="left:0px;top:876.8px;font-size:12px;color:#3b3b3b;">Property</div><div class="t" style="left:151px;top:876.8px;font-size:12px;color:#3b3b3b;">Value</div><div class="a" style="left:0;top:912px;width:475px;height:1px;background:#d8dce2"></div><div class="a" style="left:148px;top:893px;width:1px;height:19px;background:#d8dce2"></div><div class="t" style="left:0px;top:898.3px;font-size:11.5px;color:#000;">Name</div><div class="t" style="left:151px;top:898.3px;font-size:11.5px;color:#000;">VVVxD</div><div class="a" style="left:0;top:932px;width:475px;height:1px;background:#d8dce2"></div><div class="a" style="left:148px;top:913px;width:1px;height:19px;background:#d8dce2"></div><div class="t" style="left:0px;top:918.3px;font-size:11.5px;color:#000;">Description</div><div class="t" style="left:151px;top:918.3px;font-size:11.5px;color:#000;">YtM Total Created (Billings as EUP)</div><div class="a" style="left:0;top:952px;width:475px;height:1px;background:#d8dce2"></div><div class="a" style="left:148px;top:933px;width:1px;height:19px;background:#d8dce2"></div><div class="t" style="left:0px;top:938.3px;font-size:11.5px;color:#000;">Connection</div><div class="t" style="left:151px;top:938.3px;font-size:11.5px;color:#000;">NPrinting_YtM_and_MoM_reports</div><div class="a" style="left:0;top:972px;width:475px;height:1px;background:#d8dce2"></div><div class="a" style="left:148px;top:953px;width:1px;height:19px;background:#d8dce2"></div><div class="t" style="left:0px;top:958.3px;font-size:11.5px;color:#000;">Keep Source Formats</div><div class="a" style="left:305px;top:956px;width:13px;height:13px;border:1px solid #8f8f8f;background:#e9e9e9"></div><svg style="left:307px;top:958px" width="9" height="9"><path d="M1,4.5 L3.5,7.5 L8,1" stroke="#333" stroke-width="1.8" fill="none"/></svg><div class="a" style="left:0;top:992px;width:475px;height:1px;background:#d8dce2"></div><div class="a" style="left:148px;top:973px;width:1px;height:19px;background:#d8dce2"></div><div class="t" style="left:0px;top:978.3px;font-size:11.5px;color:#000;">Expand Range</div><div class="a" style="left:305px;top:976px;width:13px;height:13px;border:1px solid #8f8f8f;background:#e9e9e9"></div><svg style="left:307px;top:978px" width="9" height="9"><path d="M1,4.5 L3.5,7.5 L8,1" stroke="#333" stroke-width="1.8" fill="none"/></svg><div class="a" style="left:0;top:1012px;width:475px;height:1px;background:#d8dce2"></div><div class="a" style="left:148px;top:993px;width:1px;height:19px;background:#d8dce2"></div><div class="t" style="left:0px;top:998.3px;font-size:11.5px;color:#000;">Filter</div><div class="a" style="left:437px;top:994px;width:38px;height:17px;background:linear-gradient(#fff,#eef0f3)"></div><div class="a" style="left:437px;top:994px;width:1px;height:17px;background:#b0b5bd"></div><div class="a" style="left:457px;top:994px;width:1px;height:17px;background:#b0b5bd"></div><svg style="left:439px;top:996px" width="16" height="14"><path d="M2,10 L9,2 C10,1 12,1 13,2 C14,3 14,5 13,6 L6,13 C5,14 3,14 2,13 C1,12 1,11 2,10Z" fill="#eef0f6" stroke="#6b7390"/><path d="M6,13 H14" stroke="#2c3470"/></svg><svg style="left:460px;top:1001px" width="13" height="3"><rect x="1" y="0" width="2" height="2" fill="#222"/><rect x="5" y="0" width="2" height="2" fill="#222"/><rect x="9" y="0" width="2" height="2" fill="#222"/></svg><div class="a" style="left:0;top:1032px;width:475px;height:1px;background:#d8dce2"></div><div class="a" style="left:148px;top:1013px;width:1px;height:19px;background:#d8dce2"></div><div class="t" style="left:0px;top:1018.3px;font-size:11.5px;color:#000;">Show Headers</div><div class="t" style="left:151px;top:1018.3px;font-size:11.5px;color:#000;">Show in tag cell</div><div class="a" style="left:457px;top:1014px;width:18px;height:17px;background:linear-gradient(#fff,#eef0f3);border-left:1px solid #b0b5bd"></div><svg style="left:462px;top:1020px" width="8" height="5"><path d="M0,0 L8,0 L4,4Z" fill="#555"/></svg><div class="a" style="left:0;top:1052px;width:475px;height:1px;background:#d8dce2"></div><div class="a" style="left:148px;top:1033px;width:1px;height:19px;background:#d8dce2"></div><div class="t" style="left:0px;top:1038.3px;font-size:11.5px;color:#000;">Wrap Text</div><div class="a" style="left:305px;top:1036px;width:13px;height:13px;border:1px solid #8f8f8f;background:#e9e9e9"></div><svg style="left:307px;top:1038px" width="9" height="9"><path d="M1,4.5 L3.5,7.5 L8,1" stroke="#333" stroke-width="1.8" fill="none"/></svg><div class="a" style="left:483px;top:131px;width:952px;height:979px;background:#a0a0a0"></div><div class="a" style="left:484px;top:132px;width:951px;height:978px;background:#f7f7f7"></div><div class="a" style="left:485px;top:133px;width:950px;height:977px;background:#8d8a8d"></div><div class="a" style="left:486px;top:135px;width:949px;height:59px;background:#217346"></div><div class="a" style="left:1098px;top:135px;width:67px;height:35px;background:#1c5c37"></div><div class="t" style="left:981px;width:300px;text-align:center;top:149.3px;font-size:11.5px;color:#cfe3d6;">Table Tools</div><div class="a" style="left:1098px;top:170px;width:67px;height:24px;background:#f0f0f0"></div><svg style="left:493px;top:143px" width="15" height="15" viewBox="0 0 15 15">
<path d="M0,0 H15 V14 L14,15 H0 Z" fill="#fff"/>
<rect x="2" y="2" width="11" height="5" fill="#217346"/>
<rect x="3" y="9" width="9" height="4" fill="#217346"/>
<rect x="4.5" y="10" width="3" height="3" fill="#fff"/>
</svg><svg style="left:521px;top:142px" width="64" height="16" viewBox="0 0 64 16">
<path d="M3,6 H10 C14,6 15,9 15,11 C15,13 13,14 11,15" stroke="#7fb596" stroke-width="1.8" fill="none"/>
<path d="M6,2 L2,6 L6,10" stroke="#7fb596" stroke-width="1.8" fill="none"/>
<path d="M21,6 L26,6 L23.5,9Z" fill="#7fb596"/>
<path d="M49,6 H42 C38,6 37,9 37,11 C37,13 39,14 41,15" stroke="#7fb596" stroke-width="1.8" fill="none"/>
<path d="M46,2 L50,6 L46,10" stroke="#7fb596" stroke-width="1.8" fill="none"/>
<path d="M56,6 L61,6 L58.5,9Z" fill="#7fb596"/>
</svg><svg style="left:595px;top:148px" width="6" height="9"><rect x="0.5" y="0.5" width="5" height="1" fill="#fff"/><rect x="0.5" y="3" width="5" height="1" fill="#fff"/><path d="M0,5 L6,5 L3,8Z" fill="#fff"/></svg><div class="t" style="left:562px;top:175.8px;font-size:12px;color:#fff;">Home</div><div class="t" style="left:624px;top:175.8px;font-size:12px;color:#fff;">Insert</div><div class="t" style="left:682px;top:175.8px;font-size:12px;color:#fff;">Page Layout</div><div class="t" style="left:776px;top:175.8px;font-size:12px;color:#fff;">Formulas</div><div class="t" style="left:853px;top:175.8px;font-size:12px;color:#fff;">Data</div><div class="t" style="left:907px;top:175.8px;font-size:12px;color:#fff;">Review</div><div class="t" style="left:973px;top:175.8px;font-size:12px;color:#fff;">View</div><div class="t" style="left:1027px;top:175.8px;font-size:12px;color:#fff;">Developer</div><div class="t" style="left:1113px;top:175.8px;font-size:12px;color:#217346;">Design</div><svg style="left:1180px;top:173px" width="12" height="16" viewBox="0 0 12 16">
<path d="M3.5,11 C3.5,8 1,7 1,4.5 C1,2 3,0.8 6,0.8 C9,0.8 11,2 11,4.5 C11,7 8.5,8 8.5,11 Z" fill="none" stroke="#fff" stroke-width="1.1"/>
<path d="M3.5,12.5 H8.5 M4,14.5 H8" stroke="#fff" stroke-width="1.2"/></svg><div class="t" style="left:1198px;top:175.8px;font-size:12px;color:#e3efe7;">Tell me what you want to do...</div><div class="a" style="left:486px;top:194px;width:949px;height:92px;background:#f1f1f1"></div><div class="a" style="left:486px;top:286px;width:949px;height:1px;background:#d4d4d4"></div><div class="a" style="left:486px;top:287px;width:949px;height:823px;background:#e6e6e6"></div><div class="a" style="left:586px;top:198px;width:1px;height:83px;background:#d5d5d5"></div><div class="a" style="left:810px;top:198px;width:1px;height:83px;background:#d5d5d5"></div><div class="a" style="left:1020px;top:198px;width:1px;height:83px;background:#d5d5d5"></div><div class="a" style="left:1340px;top:198px;width:1px;height:83px;background:#d5d5d5"></div><div class="t" style="left:491px;top:202.8px;font-size:12px;color:#444;">Table Name:</div><div class="a" style="left:490px;top:221px;width:92px;height:22px;background:#fff;border:1px solid #c6c6c6"></div><div class="t" style="left:494px;top:225.8px;font-size:12px;color:#000;">Table25</div><svg style="left:492px;top:245px" width="18" height="18" viewBox="0 0 18 18">
<rect x="3.5" y="3.5" width="11" height="11" fill="#fff" stroke="#7a7a7a"/>
<rect x="3.5" y="3.5" width="11" height="2" fill="#7a7a7a"/>
<path d="M7,6 V14 M11,6 V14 M4,9 H14 M4,12 H14" stroke="#9a9a9a"/>
<path d="M9,0 L7,2 H11Z M9,18 L7,16 H11Z M0,9 L2,7 V11Z M18,9 L16,7 V11Z" fill="#3f7ac3"/></svg><div class="t" style="left:512px;top:249.3px;font-size:11.5px;color:#444;">Resize Table</div><div class="t" style="left:386px;width:300px;text-align:center;top:271.8px;font-size:12px;color:#666666;">Properties</div><svg style="left:593px;top:199px" width="18" height="18" viewBox="0 0 18 18">
<rect x="1.5" y="1.5" width="15" height="15" fill="#fff" stroke="#6d6d6d"/>
<rect x="3" y="3" width="3" height="3" fill="#a6a6a6"/><rect x="7" y="3" width="8" height="3" fill="#a6a6a6"/><rect x="3" y="7" width="3" height="8" fill="#a6a6a6"/>
<path d="M8,13.5 H13.5 V9" stroke="#3f7ac3" stroke-width="1.3" fill="none"/><path d="M11.5,9.5 L13.5,7 L15.5,9.5Z M9,11.5 L6.8,13.5 L9,15.5Z" fill="#3f7ac3"/></svg><div class="t" style="left:613px;top:202.8px;font-size:12px;color:#444;">Summarize with PivotTable</div><svg style="left:593px;top:223px" width="18" height="16" viewBox="0 0 18 16">
<rect x="1" y="0.5" width="4.5" height="15" fill="#6d6d6d"/>
<rect x="2" y="1.5" width="2.5" height="3" fill="#3f7ac3"/><rect x="2" y="4.5" width="2.5" height="3.5" fill="#f0c060"/><rect x="2" y="8" width="2.5" height="3.5" fill="#3f7ac3"/><rect x="2" y="11.5" width="2.5" height="3" fill="#f0c060"/>
<rect x="12.5" y="0.5" width="4.5" height="15" fill="#6d6d6d"/>
<rect x="13.5" y="1.5" width="2.5" height="3" fill="#3f7ac3"/><rect x="13.5" y="4.5" width="2.5" height="3.5" fill="#f0c060"/><rect x="13.5" y="8" width="2.5" height="3.5" fill="#fff"/><rect x="13.5" y="11.5" width="2.5" height="3" fill="#fff"/>
<path d="M6.5,6.5 H10" stroke="#3f7ac3" stroke-width="1.2"/><path d="M9.5,4.5 L11.5,6.5 L9.5,8.5Z" fill="#3f7ac3"/></svg><div class="t" style="left:613px;top:225.8px;font-size:12px;color:#444;">Remove Duplicates</div><svg style="left:593px;top:245px" width="18" height="18" viewBox="0 0 18 18">
<rect x="1.5" y="1.5" width="11" height="6" fill="#c5daf2" stroke="#7a7a7a"/><path d="M7.5,1.5 V7.5" stroke="#7a7a7a"/><path d="M9,4 L11,4 L10,5Z" fill="#555"/>
<rect x="5.5" y="10.5" width="11" height="6" fill="#c5daf2" stroke="#7a7a7a"/><path d="M8,13.5 H14" stroke="#7a7a7a"/>
<path d="M3,10 C1,12 2,15 5,15" stroke="#2e75c6" stroke-width="1.4" fill="none"/><path d="M4,13 L6.5,15 L4,17Z" fill="#2e75c6"/></svg><div class="t" style="left:613px;top:248.8px;font-size:12px;color:#444;">Convert to Range</div><div class="t" style="left:548px;width:300px;text-align:center;top:271.8px;font-size:12px;color:#666666;">Tools</div><svg style="left:770px;top:202px" width="30" height="30" viewBox="0 0 30 30">
<rect x="0.5" y="0.5" width="28" height="28" fill="#fff" stroke="#7a7a7a"/><rect x="0.5" y="0.5" width="28" height="3" fill="#7a7a7a"/>
<rect x="3" y="6" width="22" height="3" fill="#3f7ac3"/><rect x="3" y="12" width="10" height="3" fill="#3f7ac3"/><rect x="3" y="18" width="22" height="3" fill="#b5cfee"/>
<path d="M10,10 H26 L20,17 V25 L17,27 V17Z" fill="#7a7a7a" stroke="#fff" stroke-width="0.8"/></svg><div class="t" style="left:633.5px;width:300px;text-align:center;top:237.3px;font-size:11.5px;color:#444;">Insert</div><div class="t" style="left:633.5px;width:300px;text-align:center;top:253.3px;font-size:11.5px;color:#444;">Slicer</div><svg style="left:821px;top:202px" width="32" height="32" viewBox="0 0 32 32">
<rect x="0.5" y="0.5" width="27" height="24" fill="#fff" stroke="#7a7a7a"/><rect x="0.5" y="0.5" width="27" height="4" fill="#7a7a7a"/>
<path d="M9.5,4 V24 M18.5,4 V24 M1,10.5 H27 M1,16.5 H27" stroke="#9a9a9a"/>
<path d="M14,17 C16,24 21,25 25,24 L25,21 L31,26 L25,31 L25,28 C19,29 14,26 14,17Z" fill="#2e75c6"/></svg><div class="t" style="left:684.5px;width:300px;text-align:center;top:237.3px;font-size:11.5px;color:#444;">Export</div><svg style="left:831px;top:256px" width="7" height="4"><path d="M0,0 L7,0 L3.5,3.5Z" fill="#6a6a6a"/></svg><svg style="left:866px;top:200px" width="32" height="32" viewBox="0 0 32 32">
<path d="M1.5,1.5 H14 L20.5,8 V28.5 H1.5Z" fill="#f6f4f8" stroke="#bcbcbc"/><path d="M14,1.5 V8 H20.5" fill="none" stroke="#bcbcbc"/>
<circle cx="21" cy="24" r="6.5" fill="#f1f1f1"/>
<path d="M16,23 A5,5 0 0 1 25,20.5" stroke="#c3c3c3" stroke-width="2.4" fill="none"/><path d="M27.5,17.5 L27.5,23 L22,22Z" fill="#c3c3c3"/>
<path d="M26,25 A5,5 0 0 1 17,27.5" stroke="#c3c3c3" stroke-width="2.4" fill="none"/><path d="M14.5,30.5 L14.5,25 L20,26Z" fill="#c3c3c3"/>
</svg><div class="t" style="left:727px;width:300px;text-align:center;top:237.3px;font-size:11.5px;color:#444;">Refresh</div><svg style="left:874px;top:256px" width="7" height="4"><path d="M0,0 L7,0 L3.5,3.5Z" fill="#6a6a6a"/></svg><svg style="left:903px;top:199px" width="16" height="66" viewBox="0 0 16 66">
<rect x="1.5" y="1.5" width="13" height="14" fill="#fafafa" stroke="#b4b4b4"/><rect x="1.5" y="1.5" width="13" height="2" fill="#b4b4b4"/>
<path d="M4,7 H6 M8,7 H12 M4,11 H6 M8,11 H12" stroke="#b4b4b4"/>
<rect x="1.5" y="24.5" width="12" height="12" fill="#fafafa" stroke="#b4b4b4"/><rect x="1.5" y="24.5" width="12" height="2" fill="#b4b4b4"/><path d="M5,26 V36" stroke="#b4b4b4"/>
<circle cx="11.5" cy="35" r="4" fill="#fafafa" stroke="#b4b4b4"/><path d="M7.5,35 H15.5 M11.5,31 V39" stroke="#b4b4b4"/>
<path d="M5,50 H2 V55 H6 M10,50 H14 V55 H10 M5,52.5 H11" stroke="#b4b4b4" stroke-width="1.4" fill="none"/>
<path d="M3,46 L5,48 M8,45 V48 M13,46 L11,48 M3,59 L5,57 M8,60 V57 M13,59 L11,57" stroke="#b4b4b4"/></svg><div class="t" style="left:922px;top:202.8px;font-size:12px;color:#a6a6a6;">Properties</div><div class="t" style="left:922px;top:225.8px;font-size:12px;color:#a6a6a6;">Open in Browser</div><div class="t" style="left:922px;top:248.8px;font-size:12px;color:#a6a6a6;">Unlink</div><div class="t" style="left:764.5px;width:300px;text-align:center;top:272.3px;font-size:11.5px;color:#666666;">External Table Data</div><div class="a" style="left:1028px;top:201px;width:13px;height:13px;background:#fff;border:1px solid #a6a6a6"></div><svg style="left:1030px;top:204px" width="9" height="8"><path d="M0.8,3.8 L3.3,6.3 L8.2,0.8" stroke="#6d6d6d" stroke-width="1.2" fill="none"/></svg><div class="t" style="left:1046px;top:203.3px;font-size:11.5px;color:#444;">Header Row</div><div class="a" style="left:1028px;top:224px;width:13px;height:13px;background:#fff;border:1px solid #a6a6a6"></div><div class="t" style="left:1046px;top:226.3px;font-size:11.5px;color:#444;">Total Row</div><div class="a" style="left:1028px;top:247px;width:13px;height:13px;background:#fff;border:1px solid #a6a6a6"></div><svg style="left:1030px;top:250px" width="9" height="8"><path d="M0.8,3.8 L3.3,6.3 L8.2,0.8" stroke="#6d6d6d" stroke-width="1.2" fill="none"/></svg><div class="t" style="left:1046px;top:249.3px;font-size:11.5px;color:#444;">Banded Rows</div><div class="a" style="left:1127px;top:201px;width:13px;height:13px;background:#fff;border:1px solid #a6a6a6"></div><div class="t" style="left:1145px;top:203.3px;font-size:11.5px;color:#444;">First Column</div><div class="a" style="left:1127px;top:224px;width:13px;height:13px;background:#fff;border:1px solid #a6a6a6"></div><div class="t" style="left:1145px;top:226.3px;font-size:11.5px;color:#444;">Last Column</div><div class="a" style="left:1127px;top:247px;width:13px;height:13px;background:#fff;border:1px solid #a6a6a6"></div><div class="t" style="left:1145px;top:249.3px;font-size:11.5px;color:#444;">Banded Columns</div><div class="a" style="left:1246px;top:201px;width:13px;height:13px;background:#fff;border:1px solid #a6a6a6"></div><svg style="left:1248px;top:204px" width="9" height="8"><path d="M0.8,3.8 L3.3,6.3 L8.2,0.8" stroke="#6d6d6d" stroke-width="1.2" fill="none"/></svg><div class="t" style="left:1264px;top:203.3px;font-size:11.5px;color:#444;">Filter Button</div><div class="t" style="left:1029.5px;width:300px;text-align:center;top:271.8px;font-size:12px;color:#666666;">Table Style Options</div><div class="a" style="left:1346px;top:200px;width:100px;height:60px;background:#fff;border:1px solid #c6c6c6"></div><svg style="left:1351px;top:207px" width="84" height="47" viewBox="0 0 84 47"><rect x="0.5" y="0.5" width="12" height="9" fill="#fff" stroke="#70ad47"/><rect x="3.5" y="4" width="6" height="1" fill="#000"/><rect x="12.5" y="0.5" width="12" height="9" fill="#fff" stroke="#70ad47"/><rect x="15.5" y="4" width="6" height="1" fill="#000"/><rect x="24.5" y="0.5" width="12" height="9" fill="#fff" stroke="#70ad47"/><rect x="27.5" y="4" width="6" height="1" fill="#000"/><rect x="36.5" y="0.5" width="12" height="9" fill="#fff" stroke="#70ad47"/><rect x="39.5" y="4" width="6" height="1" fill="#000"/><rect x="48.5" y="0.5" width="12" height="9" fill="#fff" stroke="#70ad47"/><rect x="51.5" y="4" width="6" height="1" fill="#000"/><rect x="0.5" y="9.5" width="12" height="9" fill="#e2efda" stroke="#70ad47"/><rect x="3.5" y="13" width="6" height="1" fill="#000"/><rect x="12.5" y="9.5" width="12" height="9" fill="#e2efda" stroke="#70ad47"/><rect x="15.5" y="13" width="6" height="1" fill="#000"/><rect x="24.5" y="9.5" width="12" height="9" fill="#e2efda" stroke="#70ad47"/><rect x="27.5" y="13" width="6" height="1" fill="#000"/><rect x="36.5" y="9.5" width="12" height="9" fill="#e2efda" stroke="#70ad47"/><rect x="39.5" y="13" width="6" height="1" fill="#000"/><rect x="48.5" y="9.5" width="12" height="9" fill="#e2efda" stroke="#70ad47"/><rect x="51.5" y="13" width="6" height="1" fill="#000"/><rect x="0.5" y="18.5" width="12" height="10" fill="#fff" stroke="#70ad47"/><rect x="3.5" y="22" width="6" height="1" fill="#000"/><rect x="12.5" y="18.5" width="12" height="10" fill="#fff" stroke="#70ad47"/><rect x="15.5" y="22" width="6" height="1" fill="#000"/><rect x="24.5" y="18.5" width="12" height="10" fill="#fff" stroke="#70ad47"/><rect x="27.5" y="22" width="6" height="1" fill="#000"/><rect x="36.5" y="18.5" width="12" height="10" fill="#fff" stroke="#70ad47"/><rect x="39.5" y="22" width="6" height="1" fill="#000"/><rect x="48.5" y="18.5" width="12" height="10" fill="#fff" stroke="#70ad47"/><rect x="51.5" y="22" width="6" height="1" fill="#000"/><rect x="0.5" y="28.5" width="12" height="9" fill="#e2efda" stroke="#70ad47"/><rect x="3.5" y="32" width="6" height="1" fill="#000"/><rect x="12.5" y="28.5" width="12" height="9" fill="#e2efda" stroke="#70ad47"/><rect x="15.5" y="32" width="6" height="1" fill="#000"/><rect x="24.5" y="28.5" width="12" height="9" fill="#e2efda" stroke="#70ad47"/><rect x="27.5" y="32" width="6" height="1" fill="#000"/><rect x="36.5" y="28.5" width="12" height="9" fill="#e2efda" stroke="#70ad47"/><rect x="39.5" y="32" width="6" height="1" fill="#000"/><rect x="48.5" y="28.5" width="12" height="9" fill="#e2efda" stroke="#70ad47"/><rect x="51.5" y="32" width="6" height="1" fill="#000"/><rect x="0.5" y="37.5" width="12" height="9" fill="#fff" stroke="#70ad47"/><rect x="3.5" y="41" width="6" height="1" fill="#000"/><rect x="12.5" y="37.5" width="12" height="9" fill="#fff" stroke="#70ad47"/><rect x="15.5" y="41" width="6" height="1" fill="#000"/><rect x="24.5" y="37.5" width="12" height="9" fill="#fff" stroke="#70ad47"/><rect x="27.5" y="41" width="6" height="1" fill="#000"/><rect x="36.5" y="37.5" width="12" height="9" fill="#fff" stroke="#70ad47"/><rect x="39.5" y="41" width="6" height="1" fill="#000"/><rect x="48.5" y="37.5" width="12" height="9" fill="#fff" stroke="#70ad47"/><rect x="51.5" y="41" width="6" height="1" fill="#000"/><rect x="69.5" y="0.5" width="20" height="9" fill="#000" stroke="#000"/><rect x="73" y="4" width="7" height="1" fill="#fff"/><rect x="69.5" y="9.5" width="20" height="9" fill="#d9d9d9" stroke="#000"/><rect x="73" y="13" width="7" height="1" fill="#000"/><rect x="69.5" y="18.5" width="20" height="10" fill="#fff" stroke="#000"/><rect x="73" y="22" width="7" height="1" fill="#000"/><rect x="69.5" y="28.5" width="20" height="9" fill="#d9d9d9" stroke="#000"/><rect x="73" y="32" width="7" height="1" fill="#000"/><rect x="69.5" y="37.5" width="20" height="9" fill="#fff" stroke="#000"/><rect x="73" y="41" width="7" height="1" fill="#000"/></svg><div class="a" style="left:491px;top:298px;width:102px;height:26px;background:#fff;border:1px solid #c6c6c6"></div><div class="t" style="left:498px;top:305.8px;font-size:12px;color:#000;">A10</div><svg style="left:579px;top:307px" width="8" height="5"><path d="M0,0 L8,0 L4,4.5Z" fill="#707070"/></svg><svg style="left:607px;top:306px" width="3" height="12"><rect x="0" y="0" width="2" height="2" fill="#a6a6a6"/><rect x="0" y="4.5" width="2" height="2" fill="#a6a6a6"/><rect x="0" y="9" width="2" height="2" fill="#a6a6a6"/></svg><div class="a" style="left:623px;top:298px;width:110px;height:26px;background:#fff;border:1px solid #c6c6c6"></div><svg style="left:636px;top:305px" width="12" height="12"><path d="M1,1 L11,11 M11,1 L1,11" stroke="#c4c4c4" stroke-width="1.6"/></svg><svg style="left:671px;top:305px" width="15" height="12"><path d="M1,6 L5.5,10.5 L14,1.5" stroke="#c8c8c8" stroke-width="2.4" fill="none"/></svg><div class="t" style="left:709px;top:304px;font-size:15px;font-family:'Liberation Serif';font-style:italic;color:#555">f<span style="font-size:11px">x</span></div><div class="a" style="left:736px;top:298px;width:700px;height:26px;background:#fff;border:1px solid #c6c6c6;border-right:none"></div><div class="t" style="left:748px;top:304.6px;font-size:13.5px;color:#000;">&lt;Purchase Type&gt;</div><div class="a" style="left:486px;top:334px;width:949px;height:773px;overflow:hidden;background:#fff"><div class="a" style="left:0px;top:0px;width:949px;height:19px;background:#e6e6e6;"></div><div class="a" style="left:0px;top:0px;width:25px;height:776px;background:#e6e6e6;"></div><svg style="left:11px;top:4px" width="12" height="13"><path d="M0,12 L11,12 L11,0Z" fill="#b4b4b4"/></svg><div class="a" style="left:26px;top:0px;width:166px;height:19px;background:#d2d2d2;"></div><div class="a" style="left:192px;top:0px;width:1px;height:19px;background:#a6a6a6;"></div><div class="a" style="left:408px;top:0px;width:1px;height:19px;background:#a6a6a6;"></div><div class="a" style="left:574px;top:0px;width:1px;height:19px;background:#a6a6a6;"></div><div class="a" style="left:732px;top:0px;width:1px;height:19px;background:#a6a6a6;"></div><div class="a" style="left:884px;top:0px;width:1px;height:19px;background:#a6a6a6;"></div><div class="a" style="left:25px;top:0px;width:1px;height:19px;background:#a6a6a6;"></div><div class="a" style="left:0px;top:19px;width:949px;height:1px;background:#ababab;"></div><div class="a" style="left:25px;top:18px;width:168px;height:2px;background:#217346;"></div><div class="t s" style="left:58.5px;width:100px;text-align:center;top:3.5px;font-size:13.6px;color:#217346">A</div><div class="t s" style="left:250.0px;width:100px;text-align:center;top:3.5px;font-size:13.6px;color:#262626">B</div><div class="t s" style="left:441.0px;width:100px;text-align:center;top:3.5px;font-size:13.6px;color:#262626">C</div><div class="t s" style="left:603.0px;width:100px;text-align:center;top:3.5px;font-size:13.6px;color:#262626">D</div><div class="t s" style="left:758.0px;width:100px;text-align:center;top:3.5px;font-size:13.6px;color:#262626">E</div><div class="t s" style="left:900.5px;width:100px;text-align:center;top:3.5px;font-size:13.6px;color:#262626">F</div><div class="a" style="left:25px;top:19px;width:1px;height:757px;background:#ababab;"></div><div class="a" style="left:26px;top:39px;width:923px;height:1px;background:#d4d4d4;"></div><div class="a" style="left:0px;top:39px;width:25px;height:1px;background:#ababab;"></div><div class="a" style="left:26px;top:59px;width:923px;height:1px;background:#d4d4d4;"></div><div class="a" style="left:0px;top:59px;width:25px;height:1px;background:#ababab;"></div><div class="a" style="left:26px;top:79px;width:923px;height:1px;background:#d4d4d4;"></div><div class="a" style="left:0px;top:79px;width:25px;height:1px;background:#ababab;"></div><div class="a" style="left:26px;top:99px;width:923px;height:1px;background:#d4d4d4;"></div><div class="a" style="left:0px;top:99px;width:25px;height:1px;background:#ababab;"></div><div class="a" style="left:26px;top:119px;width:923px;height:1px;background:#d4d4d4;"></div><div class="a" style="left:0px;top:119px;width:25px;height:1px;background:#ababab;"></div><div class="a" style="left:26px;top:139px;width:923px;height:1px;background:#d4d4d4;"></div><div class="a" style="left:0px;top:139px;width:25px;height:1px;background:#ababab;"></div><div class="a" style="left:26px;top:159px;width:923px;height:1px;background:#d4d4d4;"></div><div class="a" style="left:0px;top:159px;width:25px;height:1px;background:#ababab;"></div><div class="a" style="left:26px;top:179px;width:923px;height:1px;background:#d4d4d4;"></div><div class="a" style="left:0px;top:179px;width:25px;height:1px;background:#ababab;"></div><div class="a" style="left:26px;top:199px;width:923px;height:1px;background:#d4d4d4;"></div><div class="a" style="left:0px;top:199px;width:25px;height:1px;background:#ababab;"></div><div class="a" style="left:26px;top:219px;width:923px;height:1px;background:#d4d4d4;"></div><div class="a" style="left:0px;top:219px;width:25px;height:1px;background:#ababab;"></div><div class="a" style="left:26px;top:239px;width:923px;height:1px;background:#d4d4d4;"></div><div class="a" style="left:0px;top:239px;width:25px;height:1px;background:#ababab;"></div><div class="a" style="left:26px;top:259px;width:923px;height:1px;background:#d4d4d4;"></div><div class="a" style="left:0px;top:259px;width:25px;height:1px;background:#ababab;"></div><div class="a" style="left:26px;top:279px;width:923px;height:1px;background:#d4d4d4;"></div><div class="a" style="left:0px;top:279px;width:25px;height:1px;background:#ababab;"></div><div class="a" style="left:26px;top:299px;width:923px;height:1px;background:#d4d4d4;"></div><div class="a" style="left:0px;top:299px;width:25px;height:1px;background:#ababab;"></div><div class="a" style="left:26px;top:319px;width:923px;height:1px;background:#d4d4d4;"></div><div class="a" style="left:0px;top:319px;width:25px;height:1px;background:#ababab;"></div><div class="a" style="left:26px;top:339px;width:923px;height:1px;background:#d4d4d4;"></div><div class="a" style="left:0px;top:339px;width:25px;height:1px;background:#ababab;"></div><div class="a" style="left:26px;top:359px;width:923px;height:1px;background:#d4d4d4;"></div><div class="a" style="left:0px;top:359px;width:25px;height:1px;background:#ababab;"></div><div class="a" style="left:26px;top:379px;width:923px;height:1px;background:#d4d4d4;"></div><div class="a" style="left:0px;top:379px;width:25px;height:1px;background:#ababab;"></div><div class="a" style="left:26px;top:399px;width:923px;height:1px;background:#d4d4d4;"></div><div class="a" style="left:0px;top:399px;width:25px;height:1px;background:#ababab;"></div><div class="a" style="left:26px;top:419px;width:923px;height:1px;background:#d4d4d4;"></div><div class="a" style="left:0px;top:419px;width:25px;height:1px;background:#ababab;"></div><div class="a" style="left:26px;top:439px;width:923px;height:1px;background:#d4d4d4;"></div><div class="a" style="left:0px;top:439px;width:25px;height:1px;background:#ababab;"></div><div class="a" style="left:26px;top:459px;width:923px;height:1px;background:#d4d4d4;"></div><div class="a" style="left:0px;top:459px;width:25px;height:1px;background:#ababab;"></div><div class="a" style="left:26px;top:479px;width:923px;height:1px;background:#d4d4d4;"></div><div class="a" style="left:0px;top:479px;width:25px;height:1px;background:#ababab;"></div><div class="a" style="left:26px;top:499px;width:923px;height:1px;background:#d4d4d4;"></div><div class="a" style="left:0px;top:499px;width:25px;height:1px;background:#ababab;"></div><div class="a" style="left:26px;top:519px;width:923px;height:1px;background:#d4d4d4;"></div><div class="a" style="left:0px;top:519px;width:25px;height:1px;background:#ababab;"></div><div class="a" style="left:26px;top:539px;width:923px;height:1px;background:#d4d4d4;"></div><div class="a" style="left:0px;top:539px;width:25px;height:1px;background:#ababab;"></div><div class="a" style="left:26px;top:559px;width:923px;height:1px;background:#d4d4d4;"></div><div class="a" style="left:0px;top:559px;width:25px;height:1px;background:#ababab;"></div><div class="a" style="left:26px;top:579px;width:923px;height:1px;background:#d4d4d4;"></div><div class="a" style="left:0px;top:579px;width:25px;height:1px;background:#ababab;"></div><div class="a" style="left:26px;top:599px;width:923px;height:1px;background:#d4d4d4;"></div><div class="a" style="left:0px;top:599px;width:25px;height:1px;background:#ababab;"></div><div class="a" style="left:26px;top:619px;width:923px;height:1px;background:#d4d4d4;"></div><div class="a" style="left:0px;top:619px;width:25px;height:1px;background:#ababab;"></div><div class="a" style="left:26px;top:639px;width:923px;height:1px;background:#d4d4d4;"></div><div class="a" style="left:0px;top:639px;width:25px;height:1px;background:#ababab;"></div><div class="a" style="left:26px;top:659px;width:923px;height:1px;background:#d4d4d4;"></div><div class="a" style="left:0px;top:659px;width:25px;height:1px;background:#ababab;"></div><div class="a" style="left:26px;top:679px;width:923px;height:1px;background:#d4d4d4;"></div><div class="a" style="left:0px;top:679px;width:25px;height:1px;background:#ababab;"></div><div class="a" style="left:26px;top:699px;width:923px;height:1px;background:#d4d4d4;"></div><div class="a" style="left:0px;top:699px;width:25px;height:1px;background:#ababab;"></div><div class="a" style="left:26px;top:719px;width:923px;height:1px;background:#d4d4d4;"></div><div class="a" style="left:0px;top:719px;width:25px;height:1px;background:#ababab;"></div><div class="a" style="left:26px;top:739px;width:923px;height:1px;background:#d4d4d4;"></div><div class="a" style="left:0px;top:739px;width:25px;height:1px;background:#ababab;"></div><div class="a" style="left:26px;top:759px;width:923px;height:1px;background:#d4d4d4;"></div><div class="a" style="left:0px;top:759px;width:25px;height:1px;background:#ababab;"></div><div class="a" style="left:26px;top:779px;width:923px;height:1px;background:#d4d4d4;"></div><div class="a" style="left:0px;top:779px;width:25px;height:1px;background:#ababab;"></div><div class="a" style="left:192px;top:20px;width:1px;height:756px;background:#d4d4d4;"></div><div class="a" style="left:408px;top:20px;width:1px;height:756px;background:#d4d4d4;"></div><div class="a" style="left:574px;top:20px;width:1px;height:756px;background:#d4d4d4;"></div><div class="a" style="left:732px;top:20px;width:1px;height:756px;background:#d4d4d4;"></div><div class="a" style="left:884px;top:20px;width:1px;height:756px;background:#d4d4d4;"></div><div class="a" style="left:26px;top:20px;width:859px;height:19px;background:#5b9bd5;"></div><div class="a" style="left:26px;top:39px;width:859px;height:1px;background:#9bc2e6;"></div><div class="a" style="left:26px;top:40px;width:859px;height:19px;background:#ddebf7;"></div><div class="a" style="left:26px;top:59px;width:859px;height:1px;background:#9bc2e6;"></div><div class="a" style="left:26px;top:79px;width:859px;height:1px;background:#9bc2e6;"></div><div class="a" style="left:884px;top:39px;width:1px;height:60px;background:#9bc2e6;"></div><div class="a" style="left:882px;top:75px;width:2px;height:4px;background:#2b3fa6;"></div><div class="a" style="left:880px;top:77px;width:2px;height:2px;background:#2b3fa6;"></div><div class="a" style="left:28px;top:22.1px;width:147px;height:18.9px;overflow:hidden"><div class="t" style="left:0;top:3px;font-size:12.9px;color:#fff;font-weight:bold;">Transaction Item Type Category</div></div><div class="a" style="left:175px;top:21px;width:17px;height:17px;border:1px solid #a9a9a9;background:linear-gradient(#fefefe,#eef0f3)"></div><svg style="left:180px;top:28px" width="8" height="5"><path d="M0,0 L7,0 L3.5,4Z" fill="#555"/></svg><div class="a" style="left:195px;top:22.1px;width:196px;height:18.9px;overflow:hidden"><div class="t" style="left:0;top:3px;font-size:12.9px;color:#fff;font-weight:bold;">Segment L3</div></div><div class="a" style="left:391px;top:21px;width:17px;height:17px;border:1px solid #a9a9a9;background:linear-gradient(#fefefe,#eef0f3)"></div><svg style="left:396px;top:28px" width="8" height="5"><path d="M0,0 L7,0 L3.5,4Z" fill="#555"/></svg><div class="a" style="left:411px;top:22.1px;width:146px;height:18.9px;overflow:hidden"><div class="t" style="left:0;top:3px;font-size:12.9px;color:#fff;font-weight:bold;">Y-2Billings</div></div><div class="a" style="left:557px;top:21px;width:17px;height:17px;border:1px solid #a9a9a9;background:linear-gradient(#fefefe,#eef0f3)"></div><svg style="left:562px;top:28px" width="8" height="5"><path d="M0,0 L7,0 L3.5,4Z" fill="#555"/></svg><div class="a" style="left:577px;top:22.1px;width:138px;height:18.9px;overflow:hidden"><div class="t" style="left:0;top:3px;font-size:12.9px;color:#fff;font-weight:bold;">Y-1Billings</div></div><div class="a" style="left:715px;top:21px;width:17px;height:17px;border:1px solid #a9a9a9;background:linear-gradient(#fefefe,#eef0f3)"></div><svg style="left:720px;top:28px" width="8" height="5"><path d="M0,0 L7,0 L3.5,4Z" fill="#555"/></svg><div class="a" style="left:735px;top:22.1px;width:132px;height:18.9px;overflow:hidden"><div class="t" style="left:0;top:3px;font-size:12.9px;color:#fff;font-weight:bold;">Y-0Billings</div></div><div class="a" style="left:867px;top:21px;width:17px;height:17px;border:1px solid #a9a9a9;background:linear-gradient(#fefefe,#eef0f3)"></div><svg style="left:872px;top:28px" width="8" height="5"><path d="M0,0 L7,0 L3.5,4Z" fill="#555"/></svg><div class="a" style="left:28px;top:40.5px;width:164px;height:19.6px;overflow:hidden"><div class="t s" style="left:0;top:3px;font-size:13.6px;color:#000;">&lt;Transaction Item Type Category&gt;</div></div><div class="a" style="left:195px;top:40.5px;width:213px;height:19.6px;overflow:hidden"><div class="t s" style="left:0;top:3px;font-size:13.6px;color:#000;">&lt;Segment L3&gt;</div></div><div class="a" style="left:411px;top:40.5px;width:163px;height:19.6px;overflow:hidden"><div class="t s" style="left:0;top:3px;font-size:13.6px;color:#000;">&lt;=$(e.Billing_All([Year Rank]={'-2'},[Month YTM]={'1'}))&gt;</div></div><div class="a" style="left:577px;top:40.5px;width:155px;height:19.6px;overflow:hidden"><div class="t s" style="left:0;top:3px;font-size:13.6px;color:#000;">&lt;=$(e.Billing_All([Year Rank]={'-1'},[Month YTM]={'1'}))&gt;</div></div><div class="a" style="left:735px;top:40.5px;width:219px;height:19.6px;overflow:hidden"><div class="t s" style="left:0;top:3px;font-size:13.6px;color:#000;">&lt;=$(e.Billing_All([Year Rank]={'0'},[Month YTM]={'1'}))&gt;</div></div><div class="t s" style="left:28px;top:63.5px;font-size:13.6px;color:#000;">&lt;deleterow&gt;</div><div class="a" style="left:26px;top:99px;width:859px;height:1px;background:#5b9bd5;"></div><div class="a" style="left:26px;top:100px;width:859px;height:19px;background:#5b9bd5;"></div><div class="a" style="left:26px;top:119px;width:859px;height:1px;background:#9bc2e6;"></div><div class="a" style="left:26px;top:120px;width:859px;height:19px;background:#ddebf7;"></div><div class="a" style="left:26px;top:139px;width:859px;height:1px;background:#9bc2e6;"></div><div class="a" style="left:26px;top:159px;width:859px;height:1px;background:#9bc2e6;"></div><div class="a" style="left:884px;top:119px;width:1px;height:60px;background:#9bc2e6;"></div><div class="a" style="left:882px;top:155px;width:2px;height:4px;background:#2b3fa6;"></div><div class="a" style="left:880px;top:157px;width:2px;height:2px;background:#2b3fa6;"></div><div class="a" style="left:28px;top:102.1px;width:147px;height:18.9px;overflow:hidden"><div class="t" style="left:0;top:3px;font-size:12.9px;color:#fff;font-weight:bold;">Transaction Item Type Category</div></div><div class="a" style="left:175px;top:101px;width:17px;height:17px;border:1px solid #a9a9a9;background:linear-gradient(#fefefe,#eef0f3)"></div><svg style="left:180px;top:108px" width="8" height="5"><path d="M0,0 L7,0 L3.5,4Z" fill="#555"/></svg><div class="a" style="left:195px;top:102.1px;width:196px;height:18.9px;overflow:hidden"><div class="t" style="left:0;top:3px;font-size:12.9px;color:#fff;font-weight:bold;">Segment L3</div></div><div class="a" style="left:391px;top:101px;width:17px;height:17px;border:1px solid #a9a9a9;background:linear-gradient(#fefefe,#eef0f3)"></div><svg style="left:396px;top:108px" width="8" height="5"><path d="M0,0 L7,0 L3.5,4Z" fill="#555"/></svg><div class="a" style="left:411px;top:102.1px;width:146px;height:18.9px;overflow:hidden"><div class="t" style="left:0;top:3px;font-size:12.9px;color:#fff;font-weight:bold;">M-2Billings</div></div><div class="a" style="left:557px;top:101px;width:17px;height:17px;border:1px solid #a9a9a9;background:linear-gradient(#fefefe,#eef0f3)"></div><svg style="left:562px;top:108px" width="8" height="5"><path d="M0,0 L7,0 L3.5,4Z" fill="#555"/></svg><div class="a" style="left:577px;top:102.1px;width:138px;height:18.9px;overflow:hidden"><div class="t" style="left:0;top:3px;font-size:12.9px;color:#fff;font-weight:bold;">M-1Billings</div></div><div class="a" style="left:715px;top:101px;width:17px;height:17px;border:1px solid #a9a9a9;background:linear-gradient(#fefefe,#eef0f3)"></div><svg style="left:720px;top:108px" width="8" height="5"><path d="M0,0 L7,0 L3.5,4Z" fill="#555"/></svg><div class="a" style="left:735px;top:102.1px;width:132px;height:18.9px;overflow:hidden"><div class="t" style="left:0;top:3px;font-size:12.9px;color:#fff;font-weight:bold;">M-0Billings</div></div><div class="a" style="left:867px;top:101px;width:17px;height:17px;border:1px solid #a9a9a9;background:linear-gradient(#fefefe,#eef0f3)"></div><svg style="left:872px;top:108px" width="8" height="5"><path d="M0,0 L7,0 L3.5,4Z" fill="#555"/></svg><div class="a" style="left:28px;top:120.5px;width:164px;height:19.6px;overflow:hidden"><div class="t s" style="left:0;top:3px;font-size:13.6px;color:#000;">&lt;Transaction Item Type Category_1&gt;</div></div><div class="a" style="left:195px;top:120.5px;width:213px;height:19.6px;overflow:hidden"><div class="t s" style="left:0;top:3px;font-size:13.6px;color:#000;">&lt;Segment L3_1&gt;</div></div><div class="a" style="left:411px;top:120.5px;width:163px;height:19.6px;overflow:hidden"><div class="t s" style="left:0;top:3px;font-size:13.6px;color:#000;">&lt;=$(e.Billing_All([Month Rank]={'-2'}))&gt;</div></div><div class="a" style="left:577px;top:120.5px;width:155px;height:19.6px;overflow:hidden"><div class="t s" style="left:0;top:3px;font-size:13.6px;color:#000;">&lt;=$(e.Billing_All([Month Rank]={'-1'}))&gt;</div></div><div class="a" style="left:735px;top:120.5px;width:219px;height:19.6px;overflow:hidden"><div class="t s" style="left:0;top:3px;font-size:13.6px;color:#000;">&lt;=$(e.Billing_All([Month Rank]={'-1'}))&gt;</div></div><div class="t s" style="left:28px;top:143.5px;font-size:13.6px;color:#000;">&lt;deleterow&gt;</div><div class="a" style="left:26px;top:179px;width:924px;height:1px;background:#5b9bd5;"></div><div class="a" style="left:26px;top:180px;width:924px;height:19px;background:#5b9bd5;"></div><div class="a" style="left:26px;top:199px;width:924px;height:1px;background:#9bc2e6;"></div><div class="a" style="left:26px;top:200px;width:924px;height:19px;background:#ddebf7;"></div><div class="a" style="left:26px;top:219px;width:924px;height:1px;background:#9bc2e6;"></div><div class="a" style="left:26px;top:239px;width:924px;height:1px;background:#9bc2e6;"></div><div class="a" style="left:28px;top:182.1px;width:147px;height:18.9px;overflow:hidden"><div class="t" style="left:0;top:3px;font-size:12.9px;color:#fff;font-weight:bold;">Purchase Type</div></div><div class="a" style="left:175px;top:181px;width:17px;height:17px;border:1px solid #a9a9a9;background:linear-gradient(#fefefe,#eef0f3)"></div><svg style="left:180px;top:188px" width="8" height="5"><path d="M0,0 L7,0 L3.5,4Z" fill="#555"/></svg><div class="a" style="left:195px;top:182.1px;width:196px;height:18.9px;overflow:hidden"><div class="t" style="left:0;top:3px;font-size:12.9px;color:#fff;font-weight:bold;">Transaction Item Type Category</div></div><div class="a" style="left:391px;top:181px;width:17px;height:17px;border:1px solid #a9a9a9;background:linear-gradient(#fefefe,#eef0f3)"></div><svg style="left:396px;top:188px" width="8" height="5"><path d="M0,0 L7,0 L3.5,4Z" fill="#555"/></svg><div class="a" style="left:411px;top:182.1px;width:146px;height:18.9px;overflow:hidden"><div class="t" style="left:0;top:3px;font-size:12.9px;color:#fff;font-weight:bold;">Item Operation Type L1</div></div><div class="a" style="left:557px;top:181px;width:17px;height:17px;border:1px solid #a9a9a9;background:linear-gradient(#fefefe,#eef0f3)"></div><svg style="left:562px;top:188px" width="8" height="5"><path d="M0,0 L7,0 L3.5,4Z" fill="#555"/></svg><div class="a" style="left:577px;top:182.1px;width:138px;height:18.9px;overflow:hidden"><div class="t" style="left:0;top:3px;font-size:12.9px;color:#fff;font-weight:bold;">Segment L3</div></div><div class="a" style="left:715px;top:181px;width:17px;height:17px;border:1px solid #a9a9a9;background:linear-gradient(#fefefe,#eef0f3)"></div><svg style="left:720px;top:188px" width="8" height="5"><path d="M0,0 L7,0 L3.5,4Z" fill="#555"/></svg><div class="a" style="left:735px;top:182.1px;width:132px;height:18.9px;overflow:hidden"><div class="t" style="left:0;top:3px;font-size:12.9px;color:#fff;font-weight:bold;">Channel L4</div></div><div class="a" style="left:867px;top:181px;width:17px;height:17px;border:1px solid #a9a9a9;background:linear-gradient(#fefefe,#eef0f3)"></div><svg style="left:872px;top:188px" width="8" height="5"><path d="M0,0 L7,0 L3.5,4Z" fill="#555"/></svg><div class="t" style="left:887px;top:185.1px;font-size:12.9px;color:#fff;font-weight:bold;">Y-2Billings</div><div class="a" style="left:28px;top:200.5px;width:164px;height:19.6px;overflow:hidden"><div class="t s" style="left:0;top:3px;font-size:13.6px;color:#000;">&lt;Purchase Type&gt;</div></div><div class="a" style="left:195px;top:200.5px;width:213px;height:19.6px;overflow:hidden"><div class="t s" style="left:0;top:3px;font-size:13.6px;color:#000;">&lt;Transaction Item Type Category_3&gt;</div></div><div class="a" style="left:411px;top:200.5px;width:163px;height:19.6px;overflow:hidden"><div class="t s" style="left:0;top:3px;font-size:13.6px;color:#000;">&lt;Item Operation Type L1_4&gt;</div></div><div class="a" style="left:577px;top:200.5px;width:155px;height:19.6px;overflow:hidden"><div class="t s" style="left:0;top:3px;font-size:13.6px;color:#000;">&lt;Segment L3_8&gt;</div></div><div class="a" style="left:735px;top:200.5px;width:149px;height:19.6px;overflow:hidden"><div class="t s" style="left:0;top:3px;font-size:13.6px;color:#000;">&lt;=[Channel L4]&gt;</div></div><div class="a" style="left:887px;top:200.5px;width:67px;height:19.6px;overflow:hidden"><div class="t s" style="left:0;top:3px;font-size:13.6px;color:#000;">&lt;=$(e.Billing_All([Year Rank]={'-2'}))&gt;</div></div><div class="t s" style="left:28px;top:223.5px;font-size:13.6px;color:#000;">&lt;deleterow&gt;</div><div class="a" style="left:26px;top:259px;width:924px;height:1px;background:#5b9bd5;"></div><div class="a" style="left:26px;top:260px;width:924px;height:19px;background:#5b9bd5;"></div><div class="a" style="left:26px;top:279px;width:924px;height:1px;background:#9bc2e6;"></div><div class="a" style="left:26px;top:280px;width:924px;height:19px;background:#ddebf7;"></div><div class="a" style="left:26px;top:299px;width:924px;height:1px;background:#9bc2e6;"></div><div class="a" style="left:26px;top:319px;width:924px;height:1px;background:#9bc2e6;"></div><div class="a" style="left:28px;top:262.1px;width:147px;height:18.9px;overflow:hidden"><div class="t" style="left:0;top:3px;font-size:12.9px;color:#fff;font-weight:bold;">Purchase Type</div></div><div class="a" style="left:175px;top:261px;width:17px;height:17px;border:1px solid #a9a9a9;background:linear-gradient(#fefefe,#eef0f3)"></div><svg style="left:180px;top:268px" width="8" height="5"><path d="M0,0 L7,0 L3.5,4Z" fill="#555"/></svg><div class="a" style="left:195px;top:262.1px;width:196px;height:18.9px;overflow:hidden"><div class="t" style="left:0;top:3px;font-size:12.9px;color:#fff;font-weight:bold;">Transaction Item Type Category</div></div><div class="a" style="left:391px;top:261px;width:17px;height:17px;border:1px solid #a9a9a9;background:linear-gradient(#fefefe,#eef0f3)"></div><svg style="left:396px;top:268px" width="8" height="5"><path d="M0,0 L7,0 L3.5,4Z" fill="#555"/></svg><div class="a" style="left:411px;top:262.1px;width:146px;height:18.9px;overflow:hidden"><div class="t" style="left:0;top:3px;font-size:12.9px;color:#fff;font-weight:bold;">Item Operation Type L1</div></div><div class="a" style="left:557px;top:261px;width:17px;height:17px;border:1px solid #a9a9a9;background:linear-gradient(#fefefe,#eef0f3)"></div><svg style="left:562px;top:268px" width="8" height="5"><path d="M0,0 L7,0 L3.5,4Z" fill="#555"/></svg><div class="a" style="left:577px;top:262.1px;width:138px;height:18.9px;overflow:hidden"><div class="t" style="left:0;top:3px;font-size:12.9px;color:#fff;font-weight:bold;">Segment L3</div></div><div class="a" style="left:715px;top:261px;width:17px;height:17px;border:1px solid #a9a9a9;background:linear-gradient(#fefefe,#eef0f3)"></div><svg style="left:720px;top:268px" width="8" height="5"><path d="M0,0 L7,0 L3.5,4Z" fill="#555"/></svg><div class="a" style="left:735px;top:262.1px;width:132px;height:18.9px;overflow:hidden"><div class="t" style="left:0;top:3px;font-size:12.9px;color:#fff;font-weight:bold;">Channel L4</div></div><div class="a" style="left:867px;top:261px;width:17px;height:17px;border:1px solid #a9a9a9;background:linear-gradient(#fefefe,#eef0f3)"></div><svg style="left:872px;top:268px" width="8" height="5"><path d="M0,0 L7,0 L3.5,4Z" fill="#555"/></svg><div class="t" style="left:887px;top:265.1px;font-size:12.9px;color:#fff;font-weight:bold;">M-2Billings</div><div class="a" style="left:28px;top:280.5px;width:164px;height:19.6px;overflow:hidden"><div class="t s" style="left:0;top:3px;font-size:13.6px;color:#000;">&lt;Purchase Type_1&gt;</div></div><div class="a" style="left:195px;top:280.5px;width:213px;height:19.6px;overflow:hidden"><div class="t s" style="left:0;top:3px;font-size:13.6px;color:#000;">&lt;Transaction Item Type Category_5&gt;</div></div><div class="a" style="left:411px;top:280.5px;width:163px;height:19.6px;overflow:hidden"><div class="t s" style="left:0;top:3px;font-size:13.6px;color:#000;">&lt;Item Operation Type L1_5&gt;</div></div><div class="a" style="left:577px;top:280.5px;width:155px;height:19.6px;overflow:hidden"><div class="t s" style="left:0;top:3px;font-size:13.6px;color:#000;">&lt;Segment L3_9&gt;</div></div><div class="a" style="left:735px;top:280.5px;width:149px;height:19.6px;overflow:hidden"><div class="t s" style="left:0;top:3px;font-size:13.6px;color:#000;">&lt;=[Channel L4]_1&gt;</div></div><div class="a" style="left:887px;top:280.5px;width:67px;height:19.6px;overflow:hidden"><div class="t s" style="left:0;top:3px;font-size:13.6px;color:#000;">&lt;=$(e.Billing_All([Month Rank]={'-2'}))&gt;</div></div><div class="t s" style="left:28px;top:303.5px;font-size:13.6px;color:#000;">&lt;deleterow&gt;</div><div class="a" style="left:26px;top:339px;width:859px;height:1px;background:#5b9bd5;"></div><div class="a" style="left:26px;top:340px;width:859px;height:19px;background:#5b9bd5;"></div><div class="a" style="left:26px;top:359px;width:859px;height:1px;background:#9bc2e6;"></div><div class="a" style="left:26px;top:360px;width:859px;height:19px;background:#ddebf7;"></div><div class="a" style="left:26px;top:379px;width:859px;height:1px;background:#9bc2e6;"></div><div class="a" style="left:26px;top:399px;width:859px;height:1px;background:#9bc2e6;"></div><div class="a" style="left:884px;top:359px;width:1px;height:60px;background:#9bc2e6;"></div><div class="a" style="left:882px;top:395px;width:2px;height:4px;background:#2b3fa6;"></div><div class="a" style="left:880px;top:397px;width:2px;height:2px;background:#2b3fa6;"></div><div class="a" style="left:28px;top:342.1px;width:147px;height:18.9px;overflow:hidden"><div class="t" style="left:0;top:3px;font-size:12.9px;color:#fff;font-weight:bold;">Item Operation Type L1</div></div><div class="a" style="left:175px;top:341px;width:17px;height:17px;border:1px solid #a9a9a9;background:linear-gradient(#fefefe,#eef0f3)"></div><svg style="left:180px;top:348px" width="8" height="5"><path d="M0,0 L7,0 L3.5,4Z" fill="#555"/></svg><div class="a" style="left:195px;top:342.1px;width:196px;height:18.9px;overflow:hidden"><div class="t" style="left:0;top:3px;font-size:12.9px;color:#fff;font-weight:bold;">Offering L4</div></div><div class="a" style="left:391px;top:341px;width:17px;height:17px;border:1px solid #a9a9a9;background:linear-gradient(#fefefe,#eef0f3)"></div><svg style="left:396px;top:348px" width="8" height="5"><path d="M0,0 L7,0 L3.5,4Z" fill="#555"/></svg><div class="a" style="left:411px;top:342.1px;width:146px;height:18.9px;overflow:hidden"><div class="t" style="left:0;top:3px;font-size:12.9px;color:#fff;font-weight:bold;">Y-2Billings</div></div><div class="a" style="left:557px;top:341px;width:17px;height:17px;border:1px solid #a9a9a9;background:linear-gradient(#fefefe,#eef0f3)"></div><svg style="left:562px;top:348px" width="8" height="5"><path d="M0,0 L7,0 L3.5,4Z" fill="#555"/></svg><div class="a" style="left:577px;top:342.1px;width:138px;height:18.9px;overflow:hidden"><div class="t" style="left:0;top:3px;font-size:12.9px;color:#fff;font-weight:bold;">Y-1Billings</div></div><div class="a" style="left:715px;top:341px;width:17px;height:17px;border:1px solid #a9a9a9;background:linear-gradient(#fefefe,#eef0f3)"></div><svg style="left:720px;top:348px" width="8" height="5"><path d="M0,0 L7,0 L3.5,4Z" fill="#555"/></svg><div class="a" style="left:735px;top:342.1px;width:132px;height:18.9px;overflow:hidden"><div class="t" style="left:0;top:3px;font-size:12.9px;color:#fff;font-weight:bold;">Y-0Billings</div></div><div class="a" style="left:867px;top:341px;width:17px;height:17px;border:1px solid #a9a9a9;background:linear-gradient(#fefefe,#eef0f3)"></div><svg style="left:872px;top:348px" width="8" height="5"><path d="M0,0 L7,0 L3.5,4Z" fill="#555"/></svg><div class="a" style="left:28px;top:360.5px;width:164px;height:19.6px;overflow:hidden"><div class="t s" style="left:0;top:3px;font-size:13.6px;color:#000;">&lt;=[Item Operation Type L1]&gt;</div></div><div class="a" style="left:195px;top:360.5px;width:213px;height:19.6px;overflow:hidden"><div class="t s" style="left:0;top:3px;font-size:13.6px;color:#000;">&lt;Offering L4&gt;</div></div><div class="a" style="left:411px;top:360.5px;width:163px;height:19.6px;overflow:hidden"><div class="t s" style="left:0;top:3px;font-size:13.6px;color:#000;">&lt;=$(e.Billing_All([Year Rank]={'-2'},[Month YTM]={'1'}))&gt;</div></div><div class="a" style="left:577px;top:360.5px;width:155px;height:19.6px;overflow:hidden"><div class="t s" style="left:0;top:3px;font-size:13.6px;color:#000;">&lt;=$(e.Billing_All([Year Rank]={'-1'},[Month YTM]={'1'}))&gt;</div></div><div class="a" style="left:735px;top:360.5px;width:219px;height:19.6px;overflow:hidden"><div class="t s" style="left:0;top:3px;font-size:13.6px;color:#000;">&lt;=$(e.Billing_All([Year Rank]={'0'},[Month YTM]={'1'}))&gt;</div></div><div class="t s" style="left:28px;top:383.5px;font-size:13.6px;color:#000;">&lt;deleterow&gt;</div><div class="a" style="left:26px;top:419px;width:859px;height:1px;background:#5b9bd5;"></div><div class="a" style="left:26px;top:420px;width:859px;height:19px;background:#5b9bd5;"></div><div class="a" style="left:26px;top:439px;width:859px;height:1px;background:#9bc2e6;"></div><div class="a" style="left:26px;top:440px;width:859px;height:19px;background:#ddebf7;"></div><div class="a" style="left:26px;top:459px;width:859px;height:1px;background:#9bc2e6;"></div><div class="a" style="left:26px;top:479px;width:859px;height:1px;background:#9bc2e6;"></div><div class="a" style="left:884px;top:439px;width:1px;height:60px;background:#9bc2e6;"></div><div class="a" style="left:882px;top:475px;width:2px;height:4px;background:#2b3fa6;"></div><div class="a" style="left:880px;top:477px;width:2px;height:2px;background:#2b3fa6;"></div><div class="a" style="left:28px;top:422.1px;width:147px;height:18.9px;overflow:hidden"><div class="t" style="left:0;top:3px;font-size:12.9px;color:#fff;font-weight:bold;">Item Operation Type L1</div></div><div class="a" style="left:175px;top:421px;width:17px;height:17px;border:1px solid #a9a9a9;background:linear-gradient(#fefefe,#eef0f3)"></div><svg style="left:180px;top:428px" width="8" height="5"><path d="M0,0 L7,0 L3.5,4Z" fill="#555"/></svg><div class="a" style="left:195px;top:422.1px;width:196px;height:18.9px;overflow:hidden"><div class="t" style="left:0;top:3px;font-size:12.9px;color:#fff;font-weight:bold;">Offering L4</div></div><div class="a" style="left:391px;top:421px;width:17px;height:17px;border:1px solid #a9a9a9;background:linear-gradient(#fefefe,#eef0f3)"></div><svg style="left:396px;top:428px" width="8" height="5"><path d="M0,0 L7,0 L3.5,4Z" fill="#555"/></svg><div class="a" style="left:411px;top:422.1px;width:146px;height:18.9px;overflow:hidden"><div class="t" style="left:0;top:3px;font-size:12.9px;color:#fff;font-weight:bold;">Y-2Billings</div></div><div class="a" style="left:557px;top:421px;width:17px;height:17px;border:1px solid #a9a9a9;background:linear-gradient(#fefefe,#eef0f3)"></div><svg style="left:562px;top:428px" width="8" height="5"><path d="M0,0 L7,0 L3.5,4Z" fill="#555"/></svg><div class="a" style="left:577px;top:422.1px;width:138px;height:18.9px;overflow:hidden"><div class="t" style="left:0;top:3px;font-size:12.9px;color:#fff;font-weight:bold;">Y-1Billings</div></div><div class="a" style="left:715px;top:421px;width:17px;height:17px;border:1px solid #a9a9a9;background:linear-gradient(#fefefe,#eef0f3)"></div><svg style="left:720px;top:428px" width="8" height="5"><path d="M0,0 L7,0 L3.5,4Z" fill="#555"/></svg><div class="a" style="left:735px;top:422.1px;width:132px;height:18.9px;overflow:hidden"><div class="t" style="left:0;top:3px;font-size:12.9px;color:#fff;font-weight:bold;">Y-0Billings</div></div><div class="a" style="left:867px;top:421px;width:17px;height:17px;border:1px solid #a9a9a9;background:linear-gradient(#fefefe,#eef0f3)"></div><svg style="left:872px;top:428px" width="8" height="5"><path d="M0,0 L7,0 L3.5,4Z" fill="#555"/></svg><div class="a" style="left:28px;top:440.5px;width:164px;height:19.6px;overflow:hidden"><div class="t s" style="left:0;top:3px;font-size:13.6px;color:#000;">&lt;=[Item Operation Type L1]_1&gt;</div></div><div class="a" style="left:195px;top:440.5px;width:213px;height:19.6px;overflow:hidden"><div class="t s" style="left:0;top:3px;font-size:13.6px;color:#000;">&lt;Offering L4_1&gt;</div></div><div class="a" style="left:411px;top:440.5px;width:163px;height:19.6px;overflow:hidden"><div class="t s" style="left:0;top:3px;font-size:13.6px;color:#000;">&lt;=$(e.Billing_All([Year Rank]={'-2'},[Month YTM]={'1'}))&gt;</div></div><div class="a" style="left:577px;top:440.5px;width:155px;height:19.6px;overflow:hidden"><div class="t s" style="left:0;top:3px;font-size:13.6px;color:#000;">&lt;=$(e.Billing_All([Year Rank]={'-1'},[Month YTM]={'1'}))&gt;</div></div><div class="a" style="left:735px;top:440.5px;width:219px;height:19.6px;overflow:hidden"><div class="t s" style="left:0;top:3px;font-size:13.6px;color:#000;">&lt;=$(e.Billing_All([Year Rank]={'0'},[Month YTM]={'1'}))&gt;</div></div><div class="t s" style="left:28px;top:463.5px;font-size:13.6px;color:#000;">&lt;deleterow&gt;</div><div class="a" style="left:26px;top:499px;width:859px;height:1px;background:#5b9bd5;"></div><div class="a" style="left:26px;top:500px;width:859px;height:19px;background:#5b9bd5;"></div><div class="a" style="left:26px;top:519px;width:859px;height:1px;background:#9bc2e6;"></div><div class="a" style="left:26px;top:520px;width:859px;height:19px;background:#ddebf7;"></div><div class="a" style="left:26px;top:539px;width:859px;height:1px;background:#9bc2e6;"></div><div class="a" style="left:26px;top:559px;width:859px;height:1px;background:#9bc2e6;"></div><div class="a" style="left:884px;top:519px;width:1px;height:60px;background:#9bc2e6;"></div><div class="a" style="left:882px;top:555px;width:2px;height:4px;background:#2b3fa6;"></div><div class="a" style="left:880px;top:557px;width:2px;height:2px;background:#2b3fa6;"></div><div class="a" style="left:28px;top:502.1px;width:147px;height:18.9px;overflow:hidden"><div class="t" style="left:0;top:3px;font-size:12.9px;color:#fff;font-weight:bold;">Segment L3</div></div><div class="a" style="left:175px;top:501px;width:17px;height:17px;border:1px solid #a9a9a9;background:linear-gradient(#fefefe,#eef0f3)"></div><svg style="left:180px;top:508px" width="8" height="5"><path d="M0,0 L7,0 L3.5,4Z" fill="#555"/></svg><div class="a" style="left:195px;top:502.1px;width:196px;height:18.9px;overflow:hidden"><div class="t" style="left:0;top:3px;font-size:12.9px;color:#fff;font-weight:bold;">Item Operation Type L1</div></div><div class="a" style="left:391px;top:501px;width:17px;height:17px;border:1px solid #a9a9a9;background:linear-gradient(#fefefe,#eef0f3)"></div><svg style="left:396px;top:508px" width="8" height="5"><path d="M0,0 L7,0 L3.5,4Z" fill="#555"/></svg><div class="a" style="left:411px;top:502.1px;width:146px;height:18.9px;overflow:hidden"><div class="t" style="left:0;top:3px;font-size:12.9px;color:#fff;font-weight:bold;">Y-2Billings</div></div><div class="a" style="left:557px;top:501px;width:17px;height:17px;border:1px solid #a9a9a9;background:linear-gradient(#fefefe,#eef0f3)"></div><svg style="left:562px;top:508px" width="8" height="5"><path d="M0,0 L7,0 L3.5,4Z" fill="#555"/></svg><div class="a" style="left:577px;top:502.1px;width:138px;height:18.9px;overflow:hidden"><div class="t" style="left:0;top:3px;font-size:12.9px;color:#fff;font-weight:bold;">Y-1Billings</div></div><div class="a" style="left:715px;top:501px;width:17px;height:17px;border:1px solid #a9a9a9;background:linear-gradient(#fefefe,#eef0f3)"></div><svg style="left:720px;top:508px" width="8" height="5"><path d="M0,0 L7,0 L3.5,4Z" fill="#555"/></svg><div class="a" style="left:735px;top:502.1px;width:132px;height:18.9px;overflow:hidden"><div class="t" style="left:0;top:3px;font-size:12.9px;color:#fff;font-weight:bold;">Y-0Billings</div></div><div class="a" style="left:867px;top:501px;width:17px;height:17px;border:1px solid #a9a9a9;background:linear-gradient(#fefefe,#eef0f3)"></div><svg style="left:872px;top:508px" width="8" height="5"><path d="M0,0 L7,0 L3.5,4Z" fill="#555"/></svg><div class="a" style="left:28px;top:520.5px;width:164px;height:19.6px;overflow:hidden"><div class="t s" style="left:0;top:3px;font-size:13.6px;color:#000;">&lt;Segment L3_2&gt;</div></div><div class="a" style="left:195px;top:520.5px;width:213px;height:19.6px;overflow:hidden"><div class="t s" style="left:0;top:3px;font-size:13.6px;color:#000;">&lt;Item Operation Type L1&gt;</div></div><div class="a" style="left:411px;top:520.5px;width:163px;height:19.6px;overflow:hidden"><div class="t s" style="left:0;top:3px;font-size:13.6px;color:#000;">&lt;=$(e.Billing_All([Year Rank]={'-2'},[Month YTM]={'1'}))&gt;</div></div><div class="a" style="left:577px;top:520.5px;width:155px;height:19.6px;overflow:hidden"><div class="t s" style="left:0;top:3px;font-size:13.6px;color:#000;">&lt;=$(e.Billing_All([Year Rank]={'-1'},[Month YTM]={'1'}))&gt;</div></div><div class="a" style="left:735px;top:520.5px;width:219px;height:19.6px;overflow:hidden"><div class="t s" style="left:0;top:3px;font-size:13.6px;color:#000;">&lt;=$(e.Billing_All([Year Rank]={'0'},[Month YTM]={'1'}))&gt;</div></div><div class="t s" style="left:28px;top:543.5px;font-size:13.6px;color:#000;">&lt;deleterow&gt;</div><div class="a" style="left:26px;top:579px;width:859px;height:1px;background:#5b9bd5;"></div><div class="a" style="left:26px;top:580px;width:859px;height:19px;background:#5b9bd5;"></div><div class="a" style="left:26px;top:599px;width:859px;height:1px;background:#9bc2e6;"></div><div class="a" style="left:26px;top:600px;width:859px;height:19px;background:#ddebf7;"></div><div class="a" style="left:26px;top:619px;width:859px;height:1px;background:#9bc2e6;"></div><div class="a" style="left:26px;top:639px;width:859px;height:1px;background:#9bc2e6;"></div><div class="a" style="left:884px;top:599px;width:1px;height:60px;background:#9bc2e6;"></div><div class="a" style="left:882px;top:635px;width:2px;height:4px;background:#2b3fa6;"></div><div class="a" style="left:880px;top:637px;width:2px;height:2px;background:#2b3fa6;"></div><div class="a" style="left:28px;top:582.1px;width:147px;height:18.9px;overflow:hidden"><div class="t" style="left:0;top:3px;font-size:12.9px;color:#fff;font-weight:bold;">Item Operation Type L1</div></div><div class="a" style="left:175px;top:581px;width:17px;height:17px;border:1px solid #a9a9a9;background:linear-gradient(#fefefe,#eef0f3)"></div><svg style="left:180px;top:588px" width="8" height="5"><path d="M0,0 L7,0 L3.5,4Z" fill="#555"/></svg><div class="a" style="left:195px;top:582.1px;width:196px;height:18.9px;overflow:hidden"><div class="t" style="left:0;top:3px;font-size:12.9px;color:#fff;font-weight:bold;">Offering L4</div></div><div class="a" style="left:391px;top:581px;width:17px;height:17px;border:1px solid #a9a9a9;background:linear-gradient(#fefefe,#eef0f3)"></div><svg style="left:396px;top:588px" width="8" height="5"><path d="M0,0 L7,0 L3.5,4Z" fill="#555"/></svg><div class="a" style="left:411px;top:582.1px;width:146px;height:18.9px;overflow:hidden"><div class="t" style="left:0;top:3px;font-size:12.9px;color:#fff;font-weight:bold;">M-2Billings</div></div><div class="a" style="left:557px;top:581px;width:17px;height:17px;border:1px solid #a9a9a9;background:linear-gradient(#fefefe,#eef0f3)"></div><svg style="left:562px;top:588px" width="8" height="5"><path d="M0,0 L7,0 L3.5,4Z" fill="#555"/></svg><div class="a" style="left:577px;top:582.1px;width:138px;height:18.9px;overflow:hidden"><div class="t" style="left:0;top:3px;font-size:12.9px;color:#fff;font-weight:bold;">M-1Billings</div></div><div class="a" style="left:715px;top:581px;width:17px;height:17px;border:1px solid #a9a9a9;background:linear-gradient(#fefefe,#eef0f3)"></div><svg style="left:720px;top:588px" width="8" height="5"><path d="M0,0 L7,0 L3.5,4Z" fill="#555"/></svg><div class="a" style="left:735px;top:582.1px;width:132px;height:18.9px;overflow:hidden"><div class="t" style="left:0;top:3px;font-size:12.9px;color:#fff;font-weight:bold;">M-0Billings</div></div><div class="a" style="left:867px;top:581px;width:17px;height:17px;border:1px solid #a9a9a9;background:linear-gradient(#fefefe,#eef0f3)"></div><svg style="left:872px;top:588px" width="8" height="5"><path d="M0,0 L7,0 L3.5,4Z" fill="#555"/></svg><div class="a" style="left:28px;top:600.5px;width:164px;height:19.6px;overflow:hidden"><div class="t s" style="left:0;top:3px;font-size:13.6px;color:#000;">&lt;=[Item Operation Type L1]_2&gt;</div></div><div class="a" style="left:195px;top:600.5px;width:213px;height:19.6px;overflow:hidden"><div class="t s" style="left:0;top:3px;font-size:13.6px;color:#000;">&lt;Offering L4_2&gt;</div></div><div class="a" style="left:411px;top:600.5px;width:163px;height:19.6px;overflow:hidden"><div class="t s" style="left:0;top:3px;font-size:13.6px;color:#000;">&lt;=$(e.Billing_All([Month Rank]={'-2'}))&gt;</div></div><div class="a" style="left:577px;top:600.5px;width:155px;height:19.6px;overflow:hidden"><div class="t s" style="left:0;top:3px;font-size:13.6px;color:#000;">&lt;=$(e.Billing_All([Month Rank]={'-1'}))&gt;</div></div><div class="a" style="left:735px;top:600.5px;width:219px;height:19.6px;overflow:hidden"><div class="t s" style="left:0;top:3px;font-size:13.6px;color:#000;">&lt;=$(e.Billing_All([Month Rank]={'-1'}))&gt;</div></div><div class="t s" style="left:28px;top:623.5px;font-size:13.6px;color:#000;">&lt;deleterow&gt;</div><div class="a" style="left:26px;top:659px;width:859px;height:1px;background:#5b9bd5;"></div><div class="a" style="left:26px;top:660px;width:859px;height:19px;background:#5b9bd5;"></div><div class="a" style="left:26px;top:679px;width:859px;height:1px;background:#9bc2e6;"></div><div class="a" style="left:26px;top:680px;width:859px;height:19px;background:#ddebf7;"></div><div class="a" style="left:26px;top:699px;width:859px;height:1px;background:#9bc2e6;"></div><div class="a" style="left:26px;top:719px;width:859px;height:1px;background:#9bc2e6;"></div><div class="a" style="left:884px;top:679px;width:1px;height:60px;background:#9bc2e6;"></div><div class="a" style="left:882px;top:715px;width:2px;height:4px;background:#2b3fa6;"></div><div class="a" style="left:880px;top:717px;width:2px;height:2px;background:#2b3fa6;"></div><div class="a" style="left:28px;top:662.1px;width:147px;height:18.9px;overflow:hidden"><div class="t" style="left:0;top:3px;font-size:12.9px;color:#fff;font-weight:bold;">Item Operation Type L1</div></div><div class="a" style="left:175px;top:661px;width:17px;height:17px;border:1px solid #a9a9a9;background:linear-gradient(#fefefe,#eef0f3)"></div><svg style="left:180px;top:668px" width="8" height="5"><path d="M0,0 L7,0 L3.5,4Z" fill="#555"/></svg><div class="a" style="left:195px;top:662.1px;width:196px;height:18.9px;overflow:hidden"><div class="t" style="left:0;top:3px;font-size:12.9px;color:#fff;font-weight:bold;">Offering L4</div></div><div class="a" style="left:391px;top:661px;width:17px;height:17px;border:1px solid #a9a9a9;background:linear-gradient(#fefefe,#eef0f3)"></div><svg style="left:396px;top:668px" width="8" height="5"><path d="M0,0 L7,0 L3.5,4Z" fill="#555"/></svg><div class="a" style="left:411px;top:662.1px;width:146px;height:18.9px;overflow:hidden"><div class="t" style="left:0;top:3px;font-size:12.9px;color:#fff;font-weight:bold;">M-2Billings</div></div><div class="a" style="left:557px;top:661px;width:17px;height:17px;border:1px solid #a9a9a9;background:linear-gradient(#fefefe,#eef0f3)"></div><svg style="left:562px;top:668px" width="8" height="5"><path d="M0,0 L7,0 L3.5,4Z" fill="#555"/></svg><div class="a" style="left:577px;top:662.1px;width:138px;height:18.9px;overflow:hidden"><div class="t" style="left:0;top:3px;font-size:12.9px;color:#fff;font-weight:bold;">M-1Billings</div></div><div class="a" style="left:715px;top:661px;width:17px;height:17px;border:1px solid #a9a9a9;background:linear-gradient(#fefefe,#eef0f3)"></div><svg style="left:720px;top:668px" width="8" height="5"><path d="M0,0 L7,0 L3.5,4Z" fill="#555"/></svg><div class="a" style="left:735px;top:662.1px;width:132px;height:18.9px;overflow:hidden"><div class="t" style="left:0;top:3px;font-size:12.9px;color:#fff;font-weight:bold;">M-0Billings</div></div><div class="a" style="left:867px;top:661px;width:17px;height:17px;border:1px solid #a9a9a9;background:linear-gradient(#fefefe,#eef0f3)"></div><svg style="left:872px;top:668px" width="8" height="5"><path d="M0,0 L7,0 L3.5,4Z" fill="#555"/></svg><div class="a" style="left:28px;top:680.5px;width:164px;height:19.6px;overflow:hidden"><div class="t s" style="left:0;top:3px;font-size:13.6px;color:#000;">&lt;=[Item Operation Type L1]_3&gt;</div></div><div class="a" style="left:195px;top:680.5px;width:213px;height:19.6px;overflow:hidden"><div class="t s" style="left:0;top:3px;font-size:13.6px;color:#000;">&lt;Offering L4_3&gt;</div></div><div class="a" style="left:411px;top:680.5px;width:163px;height:19.6px;overflow:hidden"><div class="t s" style="left:0;top:3px;font-size:13.6px;color:#000;">&lt;=$(e.Billing_All([Month Rank]={'-2'}))&gt;</div></div><div class="a" style="left:577px;top:680.5px;width:155px;height:19.6px;overflow:hidden"><div class="t s" style="left:0;top:3px;font-size:13.6px;color:#000;">&lt;=$(e.Billing_All([Month Rank]={'-1'}))&gt;</div></div><div class="a" style="left:735px;top:680.5px;width:219px;height:19.6px;overflow:hidden"><div class="t s" style="left:0;top:3px;font-size:13.6px;color:#000;">&lt;=$(e.Billing_All([Month Rank]={'-1'}))&gt;</div></div><div class="t s" style="left:28px;top:703.5px;font-size:13.6px;color:#000;">&lt;deleterow&gt;</div><div class="a" style="left:26px;top:739px;width:859px;height:1px;background:#5b9bd5;"></div><div class="a" style="left:26px;top:740px;width:859px;height:19px;background:#5b9bd5;"></div><div class="a" style="left:26px;top:759px;width:859px;height:1px;background:#9bc2e6;"></div><div class="a" style="left:26px;top:760px;width:859px;height:19px;background:#ddebf7;"></div><div class="a" style="left:26px;top:779px;width:859px;height:1px;background:#9bc2e6;"></div><div class="a" style="left:884px;top:759px;width:1px;height:60px;background:#9bc2e6;"></div><div class="a" style="left:882px;top:795px;width:2px;height:4px;background:#2b3fa6;"></div><div class="a" style="left:880px;top:797px;width:2px;height:2px;background:#2b3fa6;"></div><div class="a" style="left:28px;top:742.1px;width:147px;height:18.9px;overflow:hidden"><div class="t" style="left:0;top:3px;font-size:12.9px;color:#fff;font-weight:bold;">Segment L3</div></div><div class="a" style="left:175px;top:741px;width:17px;height:17px;border:1px solid #a9a9a9;background:linear-gradient(#fefefe,#eef0f3)"></div><svg style="left:180px;top:748px" width="8" height="5"><path d="M0,0 L7,0 L3.5,4Z" fill="#555"/></svg><div class="a" style="left:195px;top:742.1px;width:196px;height:18.9px;overflow:hidden"><div class="t" style="left:0;top:3px;font-size:12.9px;color:#fff;font-weight:bold;">Item Operation Type L1</div></div><div class="a" style="left:391px;top:741px;width:17px;height:17px;border:1px solid #a9a9a9;background:linear-gradient(#fefefe,#eef0f3)"></div><svg style="left:396px;top:748px" width="8" height="5"><path d="M0,0 L7,0 L3.5,4Z" fill="#555"/></svg><div class="a" style="left:411px;top:742.1px;width:146px;height:18.9px;overflow:hidden"><div class="t" style="left:0;top:3px;font-size:12.9px;color:#fff;font-weight:bold;">M-2Billings</div></div><div class="a" style="left:557px;top:741px;width:17px;height:17px;border:1px solid #a9a9a9;background:linear-gradient(#fefefe,#eef0f3)"></div><svg style="left:562px;top:748px" width="8" height="5"><path d="M0,0 L7,0 L3.5,4Z" fill="#555"/></svg><div class="a" style="left:577px;top:742.1px;width:138px;height:18.9px;overflow:hidden"><div class="t" style="left:0;top:3px;font-size:12.9px;color:#fff;font-weight:bold;">M-1Billings</div></div><div class="a" style="left:715px;top:741px;width:17px;height:17px;border:1px solid #a9a9a9;background:linear-gradient(#fefefe,#eef0f3)"></div><svg style="left:720px;top:748px" width="8" height="5"><path d="M0,0 L7,0 L3.5,4Z" fill="#555"/></svg><div class="a" style="left:735px;top:742.1px;width:132px;height:18.9px;overflow:hidden"><div class="t" style="left:0;top:3px;font-size:12.9px;color:#fff;font-weight:bold;">M-0Billings</div></div><div class="a" style="left:867px;top:741px;width:17px;height:17px;border:1px solid #a9a9a9;background:linear-gradient(#fefefe,#eef0f3)"></div><svg style="left:872px;top:748px" width="8" height="5"><path d="M0,0 L7,0 L3.5,4Z" fill="#555"/></svg><div class="a" style="left:28px;top:760.5px;width:164px;height:19.6px;overflow:hidden"><div class="t s" style="left:0;top:3px;font-size:13.6px;color:#000;">&lt;Segment L3_3&gt;</div></div><div class="a" style="left:195px;top:760.5px;width:213px;height:19.6px;overflow:hidden"><div class="t s" style="left:0;top:3px;font-size:13.6px;color:#000;">&lt;Item Operation Type L1_1&gt;</div></div><div class="a" style="left:411px;top:760.5px;width:163px;height:19.6px;overflow:hidden"><div class="t s" style="left:0;top:3px;font-size:13.6px;color:#000;">&lt;=$(e.Billing_All([Month Rank]={'-2'}))&gt;</div></div><div class="a" style="left:577px;top:760.5px;width:155px;height:19.6px;overflow:hidden"><div class="t s" style="left:0;top:3px;font-size:13.6px;color:#000;">&lt;=$(e.Billing_All([Month Rank]={'-1'}))&gt;</div></div><div class="a" style="left:735px;top:760.5px;width:219px;height:19.6px;overflow:hidden"><div class="t s" style="left:0;top:3px;font-size:13.6px;color:#000;">&lt;=$(e.Billing_All([Month Rank]={'-1'}))&gt;</div></div><div class="t s" style="left:28px;top:783.5px;font-size:13.6px;color:#000;">&lt;deleterow&gt;</div><div class="t s" style="left:0px;width:25px;text-align:center;top:23.5px;font-size:13.6px;color:#262626">1</div><div class="t s" style="left:0px;width:25px;text-align:center;top:43.5px;font-size:13.6px;color:#262626">2</div><div class="t s" style="left:0px;width:25px;text-align:center;top:63.5px;font-size:13.6px;color:#262626">3</div><div class="t s" style="left:0px;width:25px;text-align:center;top:83.5px;font-size:13.6px;color:#262626">4</div><div class="t s" style="left:0px;width:25px;text-align:center;top:103.5px;font-size:13.6px;color:#262626">5</div><div class="t s" style="left:0px;width:25px;text-align:center;top:123.5px;font-size:13.6px;color:#262626">6</div><div class="t s" style="left:0px;width:25px;text-align:center;top:143.5px;font-size:13.6px;color:#262626">7</div><div class="t s" style="left:0px;width:25px;text-align:center;top:163.5px;font-size:13.6px;color:#262626">8</div><div class="t s" style="left:0px;width:25px;text-align:center;top:183.5px;font-size:13.6px;color:#262626">9</div><div class="a" style="left:0px;top:200px;width:25px;height:19px;background:#d2d2d2;"></div><div class="t s" style="left:0px;width:25px;text-align:center;top:203.5px;font-size:13.6px;color:#217346">10</div><div class="t s" style="left:0px;width:25px;text-align:center;top:223.5px;font-size:13.6px;color:#262626">11</div><div class="t s" style="left:0px;width:25px;text-align:center;top:243.5px;font-size:13.6px;color:#262626">12</div><div class="t s" style="left:0px;width:25px;text-align:center;top:263.5px;font-size:13.6px;color:#262626">13</div><div class="t s" style="left:0px;width:25px;text-align:center;top:283.5px;font-size:13.6px;color:#262626">14</div><div class="t s" style="left:0px;width:25px;text-align:center;top:303.5px;font-size:13.6px;color:#262626">15</div><div class="t s" style="left:0px;width:25px;text-align:center;top:323.5px;font-size:13.6px;color:#262626">16</div><div class="t s" style="left:0px;width:25px;text-align:center;top:343.5px;font-size:13.6px;color:#262626">17</div><div class="t s" style="left:0px;width:25px;text-align:center;top:363.5px;font-size:13.6px;color:#262626">18</div><div class="t s" style="left:0px;width:25px;text-align:center;top:383.5px;font-size:13.6px;color:#262626">19</div><div class="t s" style="left:0px;width:25px;text-align:center;top:403.5px;font-size:13.6px;color:#262626">20</div><div class="t s" style="left:0px;width:25px;text-align:center;top:423.5px;font-size:13.6px;color:#262626">21</div><div class="t s" style="left:0px;width:25px;text-align:center;top:443.5px;font-size:13.6px;color:#262626">22</div><div class="t s" style="left:0px;width:25px;text-align:center;top:463.5px;font-size:13.6px;color:#262626">23</div><div class="t s" style="left:0px;width:25px;text-align:center;top:483.5px;font-size:13.6px;color:#262626">24</div><div class="t s" style="left:0px;width:25px;text-align:center;top:503.5px;font-size:13.6px;color:#262626">25</div><div class="t s" style="left:0px;width:25px;text-align:center;top:523.5px;font-size:13.6px;color:#262626">26</div><div class="t s" style="left:0px;width:25px;text-align:center;top:543.5px;font-size:13.6px;color:#262626">27</div><div class="t s" style="left:0px;width:25px;text-align:center;top:563.5px;font-size:13.6px;color:#262626">28</div><div class="t s" style="left:0px;width:25px;text-align:center;top:583.5px;font-size:13.6px;color:#262626">29</div><div class="t s" style="left:0px;width:25px;text-align:center;top:603.5px;font-size:13.6px;color:#262626">30</div><div class="t s" style="left:0px;width:25px;text-align:center;top:623.5px;font-size:13.6px;color:#262626">31</div><div class="t s" style="left:0px;width:25px;text-align:center;top:643.5px;font-size:13.6px;color:#262626">32</div><div class="t s" style="left:0px;width:25px;text-align:center;top:663.5px;font-size:13.6px;color:#262626">33</div><div class="t s" style="left:0px;width:25px;text-align:center;top:683.5px;font-size:13.6px;color:#262626">34</div><div class="t s" style="left:0px;width:25px;text-align:center;top:703.5px;font-size:13.6px;color:#262626">35</div><div class="t s" style="left:0px;width:25px;text-align:center;top:723.5px;font-size:13.6px;color:#262626">36</div><div class="t s" style="left:0px;width:25px;text-align:center;top:743.5px;font-size:13.6px;color:#262626">37</div><div class="t s" style="left:0px;width:25px;text-align:center;top:763.5px;font-size:13.6px;color:#262626">38</div><div class="t s" style="left:0px;width:25px;text-align:center;top:783.5px;font-size:13.6px;color:#262626">39</div><div class="a" style="left:24px;top:198px;width:170px;height:23px;border:2px solid #217346"></div><div class="a" style="left:26px;top:200px;width:166px;height:19px;border:1px solid #fff"></div><div class="a" style="left:188px;top:216px;width:8px;height:7px;background:#fff;"></div><div class="a" style="left:190px;top:217px;width:5px;height:5px;background:#217346;"></div></div><div class="a" style="left:486px;top:1107px;width:949px;height:1px;background:#a6a6a6"></div><div class="a" style="left:406px;top:493px;width:267px;height:21px;background:#ffffe1;border:1px solid #000"></div><div class="t" style="left:411px;top:496.8px;font-size:12px;color:#000">Connection: NPrinting_YtM_and_MoM_reports</div><svg style="left:478px;top:500px;mix-blend-mode:multiply" width="45" height="86" viewBox="0 0 45 86"><path d="M21,5 L40,3 L42,7 L42,70 C42,78 34,83 25,83 C14,83 5,79 2,72 L1,45 C1,35 4,25 8,18 Z" fill="#ffff00"/></svg></body></html>
